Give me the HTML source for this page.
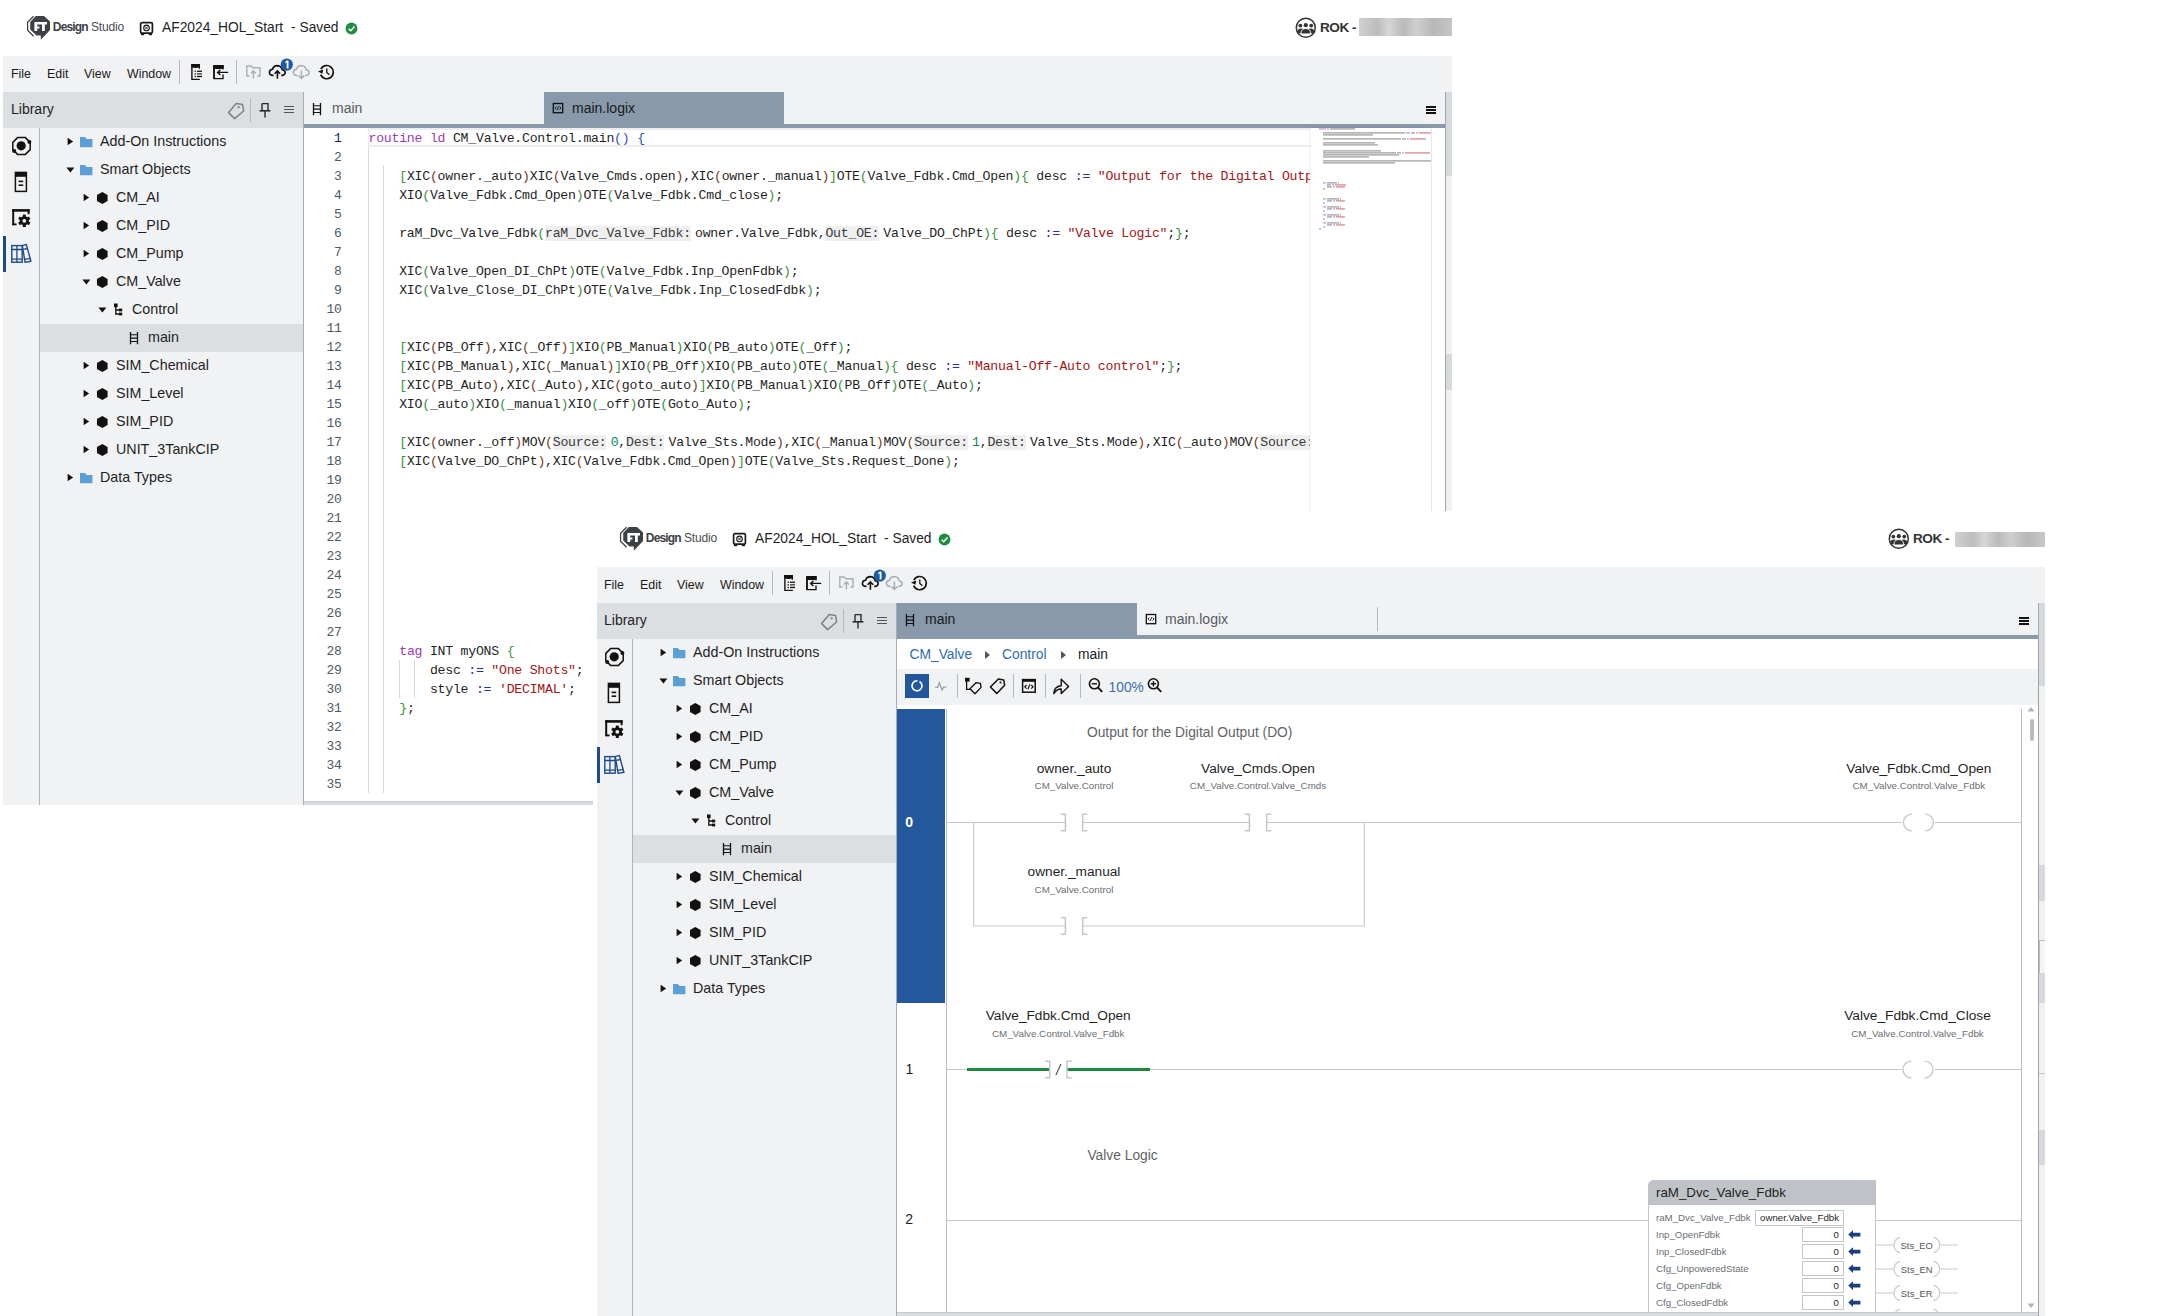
<!DOCTYPE html><html><head><meta charset="utf-8"><style>html,body{margin:0;padding:0;}body{width:2175px;height:1316px;position:relative;overflow:hidden;background:#fff;font-family:"Liberation Sans",sans-serif;}svg{overflow:visible}</style></head><body>
<div style="position:absolute;left:0px;top:0px;width:1452px;height:805px;background:#ffffff;"></div>
<svg style="position:absolute;left:24px;top:12px;" width="32" height="32" viewBox="0 0 32 32"><path d="M9.6 4.2 L3.6 10.2 L3.6 18.2 L9.6 24.2" fill="none" stroke="#3d4044" stroke-width="1.25"/><path d="M11.8 4.1 L20 4.1 L26 9.6 L26 18 L16.8 27.7 L16.8 23.5 L12.5 23.5 L6.2 17.5 L6.2 10 Z" fill="#3d4044"/><path d="M10.4 10 L23 10 L23 12.4 L20.8 12.4 L20.8 18.9 L18 18.9 L18 12.4 L13.2 12.4 L13.2 14.6 L15.4 14.6 L15.4 16.4 L13.2 16.4 L13.2 18.9 L10.4 18.9 Z" fill="#fff"/></svg>
<div style="position:absolute;left:52.80px;top:21.00px;font-family:'Liberation Sans', sans-serif;font-size:12px;line-height:12px;color:#3d4044;font-weight:bold;white-space:pre;letter-spacing:-0.83px;">Design</div>
<div style="position:absolute;left:91.00px;top:21.00px;font-family:'Liberation Sans', sans-serif;font-size:12px;line-height:12px;color:#4a4d50;font-weight:normal;white-space:pre;letter-spacing:-0.15px;">Studio</div>
<svg style="position:absolute;left:139px;top:21px;" width="15" height="15" viewBox="0 0 15 15"><rect x="1.6" y="1.6" width="11.8" height="10.6" rx="1.4" fill="none" stroke="#1a1a1a" stroke-width="1.7"/><circle cx="7.5" cy="6.9" r="2.8" fill="none" stroke="#1a1a1a" stroke-width="1.1"/><path d="M5.8 5.2 L9.2 8.6 M9.2 5.2 L5.8 8.6" stroke="#1a1a1a" stroke-width="0.9"/><rect x="2" y="12" width="3.2" height="2.2" fill="#1a1a1a"/><rect x="9.8" y="12" width="3.2" height="2.2" fill="#1a1a1a"/></svg>
<div style="position:absolute;left:162.00px;top:21.00px;font-family:'Liberation Sans', sans-serif;font-size:13.8px;line-height:13.8px;color:#1f1f1f;font-weight:normal;white-space:pre;">AF2024_HOL_Start</div>
<div style="position:absolute;left:291.00px;top:21.00px;font-family:'Liberation Sans', sans-serif;font-size:13.8px;line-height:13.8px;color:#1f1f1f;font-weight:normal;white-space:pre;">- Saved</div>
<svg style="position:absolute;left:345px;top:21.5px;" width="13" height="13" viewBox="0 0 13 13"><circle cx="6.5" cy="6.5" r="5.9" fill="#1f8d40"/><path d="M3.6 6.7 L5.7 8.7 L9.5 4.6" fill="none" stroke="#fff" stroke-width="1.5"/></svg>
<svg style="position:absolute;left:1295px;top:17px;" width="22" height="22" viewBox="0 0 22 22"><circle cx="10.8" cy="10.8" r="9.5" fill="none" stroke="#333" stroke-width="1.5"/><g transform="translate(10.8 12.4) scale(1.18) translate(-10.8 -11.4)"><circle cx="6.2" cy="8.2" r="1.6" fill="#333"/><path d="M3.6 14.6 L3.8 12.4 Q4.4 10.6 6.6 10.6 L8.4 10.8 L8 14.6 Z" fill="#333"/><circle cx="15.4" cy="8.2" r="1.6" fill="#333"/><path d="M18 14.6 L17.8 12.4 Q17.2 10.6 15 10.6 L13.2 10.8 L13.6 14.6 Z" fill="#333"/><circle cx="10.8" cy="7.8" r="2" fill="#fff"/><circle cx="10.8" cy="7.8" r="1.8" fill="#333"/><path d="M6.8 15.2 L7 12.8 Q7.6 10.6 10.8 10.6 Q14 10.6 14.6 12.8 L14.8 15.2 Z" fill="#333" stroke="#fff" stroke-width="0.7"/></g></svg>
<div style="position:absolute;left:1320.00px;top:21.00px;font-family:'Liberation Sans', sans-serif;font-size:13.6px;line-height:13.6px;color:#333;font-weight:bold;white-space:pre;letter-spacing:-0.5px;">ROK -</div>
<div style="position:absolute;left:1359px;top:18px;width:93px;height:18px;background:linear-gradient(90deg,#d0d0d0,#bdbdbd 20%,#d6d6d6 32%,#bababa 48%,#cfcfcf 62%,#b7b7b7 80%,#c6c6c6);filter:blur(0.6px);"></div>
<div style="position:absolute;left:3px;top:56px;width:1449px;height:36px;background:#f1f2f4;"></div>
<div style="position:absolute;left:11.00px;top:68.00px;font-family:'Liberation Sans', sans-serif;font-size:12.4px;line-height:12.4px;color:#1a1a1a;font-weight:normal;white-space:pre;">File</div>
<div style="position:absolute;left:47.00px;top:68.00px;font-family:'Liberation Sans', sans-serif;font-size:12.4px;line-height:12.4px;color:#1a1a1a;font-weight:normal;white-space:pre;">Edit</div>
<div style="position:absolute;left:84.00px;top:68.00px;font-family:'Liberation Sans', sans-serif;font-size:12.4px;line-height:12.4px;color:#1a1a1a;font-weight:normal;white-space:pre;">View</div>
<div style="position:absolute;left:127.00px;top:68.00px;font-family:'Liberation Sans', sans-serif;font-size:12.4px;line-height:12.4px;color:#1a1a1a;font-weight:normal;white-space:pre;">Window</div>
<div style="position:absolute;left:179px;top:60px;width:1px;height:24px;background:#b5b9bd;"></div>
<div style="position:absolute;left:236px;top:60px;width:1px;height:24px;background:#b5b9bd;"></div>
<svg style="position:absolute;left:190px;top:63px;" width="14" height="18" viewBox="0 0 14 18"><path d="M1.9 1.2 L1.9 16.4 L9.8 16.4" fill="none" stroke="#111" stroke-width="1.4"/><path d="M9.3 1.2 L9.3 5.8" stroke="#111" stroke-width="1.3"/><path d="M1.2 1 L10 1 L10 4.2 Q5.6 5.6 1.2 4.2 Z" fill="#111"/><rect x="4.6" y="7.6" width="1.3" height="1.3" fill="#111"/><rect x="7" y="7.6" width="5" height="1.3" fill="#111"/><rect x="4.6" y="10.2" width="1.3" height="1.3" fill="#111"/><rect x="7" y="10.2" width="5" height="1.3" fill="#333"/><rect x="4.6" y="12.8" width="1.3" height="1.3" fill="#111"/><rect x="7" y="12.8" width="5" height="1.3" fill="#111"/></svg>
<svg style="position:absolute;left:212px;top:64px;" width="18" height="16" viewBox="0 0 18 16"><path d="M11 5.6 L11 1.8 L2 1.8 L2 14.6 L11 14.6 L11 10.6" fill="none" stroke="#111" stroke-width="1.35"/><path d="M2 1.8 L2 14.6" stroke="#111" stroke-width="1.5"/><path d="M1.4 1.1 L11.6 1.1 L11.6 4.4 Q6.5 5.8 1.4 4.4 Z" fill="#111"/><path d="M16.2 8.4 L5.6 8.4 M8.4 5.8 L5.6 8.4 L8.4 11" fill="none" stroke="#111" stroke-width="1.4"/></svg>
<svg style="position:absolute;left:245px;top:64px;" width="17" height="16" viewBox="0 0 17 16"><path d="M4.4 12 L1.8 12 L1.8 2 L6.2 2 L7.8 3.8 L15 3.8 L15 12 L12.4 12" fill="none" stroke="#a9aeb3" stroke-width="1.4"/><path d="M8.4 14.6 L8.4 6.8 M5.8 9.4 L8.4 6.8 L11 9.4" fill="none" stroke="#a9aeb3" stroke-width="1.4"/></svg>
<svg style="position:absolute;left:268px;top:63px;" width="20" height="18" viewBox="0 0 20 18"><path d="M5.6 12.4 L4.4 12.4 Q1.4 12 1.4 9.2 Q1.6 6.4 4.6 6.2 Q5.6 2.6 9.4 2.6 Q13.4 2.8 14.2 6.8 Q17.2 7.2 17.2 9.8 Q17 12.2 14.4 12.4 L13.2 12.4" fill="none" stroke="#111" stroke-width="1.6"/><path d="M9.4 15.8 L9.4 8 M6.6 10.8 L9.4 8 L12.2 10.8" fill="none" stroke="#111" stroke-width="1.6"/></svg>
<svg style="position:absolute;left:280px;top:58px;" width="14" height="14" viewBox="0 0 14 14"><circle cx="6.8" cy="6.6" r="6.1" fill="#1f5ba3"/><path d="M7.6 2.8 L7.6 10.4" stroke="#fff" stroke-width="1.8"/><path d="M5.4 4.6 L7.8 2.8" stroke="#fff" stroke-width="1.4"/></svg>
<svg style="position:absolute;left:292px;top:63px;" width="20" height="18" viewBox="0 0 20 18"><path d="M5.6 12.4 L4.4 12.4 Q1.4 12 1.4 9.2 Q1.6 6.4 4.6 6.2 Q5.6 2.6 9.4 2.6 Q13.4 2.8 14.2 6.8 Q17.2 7.2 17.2 9.8 Q17 12.2 14.4 12.4 L13.2 12.4" fill="none" stroke="#a9aeb3" stroke-width="1.5"/><path d="M9.4 7.4 L9.4 15.4 M6.6 12.6 L9.4 15.4 L12.2 12.6" fill="none" stroke="#a9aeb3" stroke-width="1.5"/></svg>
<svg style="position:absolute;left:317px;top:63px;" width="19" height="18" viewBox="0 0 19 18"><path d="M3.8 6.2 A6.6 6.6 0 1 1 3.6 11.6" fill="none" stroke="#111" stroke-width="1.7"/><path d="M1 8.4 L5.4 10.8 L6.2 6.4 Z" fill="#111"/><path d="M9.8 5.4 L9.8 9.4 L12.4 11.8" fill="none" stroke="#111" stroke-width="1.3"/></svg>
<div style="position:absolute;left:3px;top:92px;width:300px;height:36px;background:#dcdfe2;"></div>
<div style="position:absolute;left:11.00px;top:102.00px;font-family:'Liberation Sans', sans-serif;font-size:14px;line-height:14px;color:#1f1f1f;font-weight:normal;white-space:pre;">Library</div>
<svg style="position:absolute;left:227px;top:102px;" width="18" height="18" viewBox="0 0 18 18"><path d="M9.2 1.6 L15.6 2.6 L16.6 9 L7.6 16.6 L1.6 10.6 Z" fill="none" stroke="#7f8387" stroke-width="1.5" stroke-linejoin="round"/><rect x="10.6" y="4.2" width="2" height="2" fill="#7f8387"/></svg>
<div style="position:absolute;left:250px;top:98px;width:1px;height:24px;background:#b5b9bd;"></div>
<svg style="position:absolute;left:259px;top:102px;" width="12" height="16" viewBox="0 0 12 16"><path d="M3 1.6 L9 1.6 L9 8.4 M3 1.6 L3 8.4" fill="none" stroke="#2a2a2a" stroke-width="1.4"/><path d="M0.6 8.8 L11.4 8.8" stroke="#2a2a2a" stroke-width="1.6"/><path d="M6 9 L6 15.6" stroke="#2a2a2a" stroke-width="1.4"/></svg>
<div style="position:absolute;left:284px;top:106px;width:10px;height:1.4px;background:#505458;"></div>
<div style="position:absolute;left:284px;top:109px;width:10px;height:1.4px;background:#505458;"></div>
<div style="position:absolute;left:284px;top:112px;width:10px;height:1.4px;background:#505458;"></div>
<div style="position:absolute;left:304px;top:92px;width:1141px;height:32px;background:#f1f2f4;"></div>
<div style="position:absolute;left:304px;top:124px;width:1141px;height:4px;background:#8799aa;"></div>
<div style="position:absolute;left:544px;top:92px;width:240px;height:32px;background:#8799aa;"></div>
<svg style="position:absolute;left:312px;top:102px;" width="10" height="14" viewBox="0 0 10 14"><path d="M1.5 1 L1.5 13.2 M8.5 1 L8.5 13.2" stroke="#111" stroke-width="1.3"/><path d="M1.5 3.7 L8.5 3.7 M1.5 7.1 L8.5 7.1 M1.5 10.5 L8.5 10.5" stroke="#111" stroke-width="1.1"/></svg>
<div style="position:absolute;left:332.00px;top:101.00px;font-family:'Liberation Sans', sans-serif;font-size:14px;line-height:14px;color:#555a5f;font-weight:normal;white-space:pre;">main</div>
<svg style="position:absolute;left:552px;top:102px;" width="12" height="12" viewBox="0 0 12 12"><rect x="1.3" y="1.5" width="9.4" height="9.2" fill="none" stroke="#111" stroke-width="1.3"/><path d="M4.4 4.6 L3 6 L4.4 7.4 M7.6 4.6 L9 6 L7.6 7.4 M6.6 4.2 L5.4 7.8" fill="none" stroke="#111" stroke-width="0.9"/></svg>
<div style="position:absolute;left:572.00px;top:101.00px;font-family:'Liberation Sans', sans-serif;font-size:14px;line-height:14px;color:#1a1a1a;font-weight:normal;white-space:pre;">main.logix</div>
<div style="position:absolute;left:1426px;top:106px;width:10px;height:1.5px;background:#111;"></div>
<div style="position:absolute;left:1426px;top:109px;width:10px;height:1.5px;background:#111;"></div>
<div style="position:absolute;left:1426px;top:112px;width:10px;height:1.5px;background:#111;"></div>
<div style="position:absolute;left:1445px;top:92px;width:7px;height:713px;background:#eff1f3;border-left:1px solid #a3a8ad;box-sizing:border-box;"></div>
<div style="position:absolute;left:1446px;top:92px;width:6px;height:84px;background:#d6dadd;"></div>
<div style="position:absolute;left:1446px;top:354px;width:6px;height:36px;background:#d6dadd;"></div>
<div style="position:absolute;left:3px;top:128px;width:36px;height:677px;background:#f1f2f4;"></div>
<div style="position:absolute;left:39px;top:128px;width:1px;height:677px;background:#b0b4b8;"></div>
<svg style="position:absolute;left:11px;top:136px;" width="21" height="20" viewBox="0 0 21 20"><path d="M6.6 1.6 L14.4 1.6 L19.2 6.4 L19.2 13.6 L14.4 18.4 L6.6 18.4 L1.8 13.6 L1.8 6.4 Z" fill="none" stroke="#111" stroke-width="1.5"/><circle cx="10.2" cy="9.8" r="4.6" fill="#111"/><circle cx="18.4" cy="6" r="2" fill="#111"/><circle cx="3.2" cy="15" r="2" fill="#111"/></svg>
<svg style="position:absolute;left:14px;top:171px;" width="14" height="22" viewBox="0 0 14 22"><rect x="1.4" y="1.4" width="11" height="19" fill="none" stroke="#111" stroke-width="1.5"/><rect x="1" y="1" width="12" height="4.8" fill="#111"/><rect x="4.6" y="9.6" width="4.6" height="1.6" fill="#111"/><rect x="4.6" y="13.4" width="4.6" height="1.6" fill="#111"/></svg>
<svg style="position:absolute;left:11px;top:208px;" width="22" height="21" viewBox="0 0 22 21"><path d="M1.2 2.4 L18.6 2.4" stroke="#111" stroke-width="2.6"/><path d="M2.2 1.4 L2.2 17.2" stroke="#111" stroke-width="2"/><path d="M17.6 1.4 L17.6 6.2" stroke="#111" stroke-width="2"/><path d="M1.4 16.4 L5.6 16.4" stroke="#111" stroke-width="1.8"/><circle cx="13.3" cy="12.8" r="4.6" fill="#111"/><rect x="11.80" y="6.60" width="3" height="3" fill="#111" transform="rotate(0 13.3 12.8)"/><rect x="11.80" y="6.60" width="3" height="3" fill="#111" transform="rotate(60 13.3 12.8)"/><rect x="11.80" y="6.60" width="3" height="3" fill="#111" transform="rotate(120 13.3 12.8)"/><rect x="11.80" y="6.60" width="3" height="3" fill="#111" transform="rotate(180 13.3 12.8)"/><rect x="11.80" y="6.60" width="3" height="3" fill="#111" transform="rotate(240 13.3 12.8)"/><rect x="11.80" y="6.60" width="3" height="3" fill="#111" transform="rotate(300 13.3 12.8)"/><circle cx="13.3" cy="12.8" r="1.9" fill="#f1f2f4"/></svg>
<div style="position:absolute;left:3px;top:236px;width:3px;height:36px;background:#1d4a8a;"></div>
<svg style="position:absolute;left:10px;top:243px;" width="23" height="21" viewBox="0 0 23 21"><rect x="1.8" y="2.6" width="10.4" height="16.6" fill="none" stroke="#1d4a8a" stroke-width="1.4"/><path d="M6.9 2.6 L6.9 19.2 M1.8 6.5 L12.2 6.5 M1.8 16.2 L12.2 16.2" stroke="#1d4a8a" stroke-width="1.3"/><path d="M12.3 2.6 L16.3 1.4 L20.9 18.3 L15.1 19.4 Z" fill="none" stroke="#1d4a8a" stroke-width="1.4" stroke-linejoin="round"/><path d="M13.2 6.3 L17.4 5.5 M14.7 16.3 L20.1 15.3" stroke="#1d4a8a" stroke-width="1.3"/></svg>
<div style="position:absolute;left:40px;top:128px;width:263px;height:677px;background:#f1f2f4;"></div>
<div style="position:absolute;left:303px;top:92px;width:1px;height:713px;background:#a9adb1;"></div>
<div style="position:absolute;left:40px;top:324px;width:263px;height:28px;background:#dcdfe2;"></div>
<svg style="position:absolute;left:67px;top:137.4px;" width="7" height="9" viewBox="0 0 7 9"><path d="M0.6 0.8 L6.2 4.5 L0.6 8.2 Z" fill="#111"/></svg>
<svg style="position:absolute;left:80px;top:136.5px;" width="13" height="11" viewBox="0 0 13 11"><path d="M0 0 L5 0 L6.6 2 L12.4 2 L12.4 10.2 L0 10.2 Z" fill="#5b9fd6"/></svg>
<div style="position:absolute;left:100.00px;top:134.00px;font-family:'Liberation Sans', sans-serif;font-size:14.3px;line-height:14.3px;color:#1f1f1f;font-weight:normal;white-space:pre;">Add-On Instructions</div>
<svg style="position:absolute;left:65.6px;top:167px;" width="9" height="7" viewBox="0 0 9 7"><path d="M0.4 0.6 L8.4 0.6 L4.4 5.4 Z" fill="#111"/></svg>
<svg style="position:absolute;left:80px;top:164.5px;" width="13" height="11" viewBox="0 0 13 11"><path d="M0 0 L5 0 L6.6 2 L12.4 2 L12.4 10.2 L0 10.2 Z" fill="#5b9fd6"/></svg>
<div style="position:absolute;left:100.00px;top:162.00px;font-family:'Liberation Sans', sans-serif;font-size:14.3px;line-height:14.3px;color:#1f1f1f;font-weight:normal;white-space:pre;">Smart Objects</div>
<svg style="position:absolute;left:83px;top:193.4px;" width="7" height="9" viewBox="0 0 7 9"><path d="M0.6 0.8 L6.2 4.5 L0.6 8.2 Z" fill="#111"/></svg>
<svg style="position:absolute;left:96.6px;top:192px;" width="11" height="12" viewBox="0 0 11 12"><path d="M5.3 0 L10.6 3 L10.6 9 L5.3 12 L0 9 L0 3 Z" fill="#111"/></svg>
<div style="position:absolute;left:116.00px;top:190.00px;font-family:'Liberation Sans', sans-serif;font-size:14.3px;line-height:14.3px;color:#1f1f1f;font-weight:normal;white-space:pre;">CM_AI</div>
<svg style="position:absolute;left:83px;top:221.4px;" width="7" height="9" viewBox="0 0 7 9"><path d="M0.6 0.8 L6.2 4.5 L0.6 8.2 Z" fill="#111"/></svg>
<svg style="position:absolute;left:96.6px;top:220px;" width="11" height="12" viewBox="0 0 11 12"><path d="M5.3 0 L10.6 3 L10.6 9 L5.3 12 L0 9 L0 3 Z" fill="#111"/></svg>
<div style="position:absolute;left:116.00px;top:218.00px;font-family:'Liberation Sans', sans-serif;font-size:14.3px;line-height:14.3px;color:#1f1f1f;font-weight:normal;white-space:pre;">CM_PID</div>
<svg style="position:absolute;left:83px;top:249.4px;" width="7" height="9" viewBox="0 0 7 9"><path d="M0.6 0.8 L6.2 4.5 L0.6 8.2 Z" fill="#111"/></svg>
<svg style="position:absolute;left:96.6px;top:248px;" width="11" height="12" viewBox="0 0 11 12"><path d="M5.3 0 L10.6 3 L10.6 9 L5.3 12 L0 9 L0 3 Z" fill="#111"/></svg>
<div style="position:absolute;left:116.00px;top:246.00px;font-family:'Liberation Sans', sans-serif;font-size:14.3px;line-height:14.3px;color:#1f1f1f;font-weight:normal;white-space:pre;">CM_Pump</div>
<svg style="position:absolute;left:81.6px;top:279px;" width="9" height="7" viewBox="0 0 9 7"><path d="M0.4 0.6 L8.4 0.6 L4.4 5.4 Z" fill="#111"/></svg>
<svg style="position:absolute;left:96.6px;top:276px;" width="11" height="12" viewBox="0 0 11 12"><path d="M5.3 0 L10.6 3 L10.6 9 L5.3 12 L0 9 L0 3 Z" fill="#111"/></svg>
<div style="position:absolute;left:116.00px;top:274.00px;font-family:'Liberation Sans', sans-serif;font-size:14.3px;line-height:14.3px;color:#1f1f1f;font-weight:normal;white-space:pre;">CM_Valve</div>
<svg style="position:absolute;left:97.6px;top:307px;" width="9" height="7" viewBox="0 0 9 7"><path d="M0.4 0.6 L8.4 0.6 L4.4 5.4 Z" fill="#111"/></svg>
<svg style="position:absolute;left:112.6px;top:303px;" width="11" height="13" viewBox="0 0 11 13"><rect x="1" y="0.5" width="3.6" height="3.6" fill="#111"/><path d="M2.8 3 L2.8 11 L6 11 M2.8 7 L6 7" fill="none" stroke="#111" stroke-width="1.3"/><rect x="6" y="5.6" width="3.2" height="2.8" fill="#111"/><rect x="6" y="9.6" width="3.2" height="2.8" fill="#111"/></svg>
<div style="position:absolute;left:132.00px;top:302.00px;font-family:'Liberation Sans', sans-serif;font-size:14.3px;line-height:14.3px;color:#1f1f1f;font-weight:normal;white-space:pre;">Control</div>
<svg style="position:absolute;left:128.5px;top:330.5px;" width="10" height="14" viewBox="0 0 10 14"><path d="M1.5 1 L1.5 13.2 M8.5 1 L8.5 13.2" stroke="#111" stroke-width="1.3"/><path d="M1.5 3.7 L8.5 3.7 M1.5 7.1 L8.5 7.1 M1.5 10.5 L8.5 10.5" stroke="#111" stroke-width="1.1"/></svg>
<div style="position:absolute;left:148.00px;top:330.00px;font-family:'Liberation Sans', sans-serif;font-size:14.3px;line-height:14.3px;color:#1f1f1f;font-weight:normal;white-space:pre;">main</div>
<svg style="position:absolute;left:83px;top:361.4px;" width="7" height="9" viewBox="0 0 7 9"><path d="M0.6 0.8 L6.2 4.5 L0.6 8.2 Z" fill="#111"/></svg>
<svg style="position:absolute;left:96.6px;top:360px;" width="11" height="12" viewBox="0 0 11 12"><path d="M5.3 0 L10.6 3 L10.6 9 L5.3 12 L0 9 L0 3 Z" fill="#111"/></svg>
<div style="position:absolute;left:116.00px;top:358.00px;font-family:'Liberation Sans', sans-serif;font-size:14.3px;line-height:14.3px;color:#1f1f1f;font-weight:normal;white-space:pre;">SIM_Chemical</div>
<svg style="position:absolute;left:83px;top:389.4px;" width="7" height="9" viewBox="0 0 7 9"><path d="M0.6 0.8 L6.2 4.5 L0.6 8.2 Z" fill="#111"/></svg>
<svg style="position:absolute;left:96.6px;top:388px;" width="11" height="12" viewBox="0 0 11 12"><path d="M5.3 0 L10.6 3 L10.6 9 L5.3 12 L0 9 L0 3 Z" fill="#111"/></svg>
<div style="position:absolute;left:116.00px;top:386.00px;font-family:'Liberation Sans', sans-serif;font-size:14.3px;line-height:14.3px;color:#1f1f1f;font-weight:normal;white-space:pre;">SIM_Level</div>
<svg style="position:absolute;left:83px;top:417.4px;" width="7" height="9" viewBox="0 0 7 9"><path d="M0.6 0.8 L6.2 4.5 L0.6 8.2 Z" fill="#111"/></svg>
<svg style="position:absolute;left:96.6px;top:416px;" width="11" height="12" viewBox="0 0 11 12"><path d="M5.3 0 L10.6 3 L10.6 9 L5.3 12 L0 9 L0 3 Z" fill="#111"/></svg>
<div style="position:absolute;left:116.00px;top:414.00px;font-family:'Liberation Sans', sans-serif;font-size:14.3px;line-height:14.3px;color:#1f1f1f;font-weight:normal;white-space:pre;">SIM_PID</div>
<svg style="position:absolute;left:83px;top:445.4px;" width="7" height="9" viewBox="0 0 7 9"><path d="M0.6 0.8 L6.2 4.5 L0.6 8.2 Z" fill="#111"/></svg>
<svg style="position:absolute;left:96.6px;top:444px;" width="11" height="12" viewBox="0 0 11 12"><path d="M5.3 0 L10.6 3 L10.6 9 L5.3 12 L0 9 L0 3 Z" fill="#111"/></svg>
<div style="position:absolute;left:116.00px;top:442.00px;font-family:'Liberation Sans', sans-serif;font-size:14.3px;line-height:14.3px;color:#1f1f1f;font-weight:normal;white-space:pre;">UNIT_3TankCIP</div>
<svg style="position:absolute;left:67px;top:473.4px;" width="7" height="9" viewBox="0 0 7 9"><path d="M0.6 0.8 L6.2 4.5 L0.6 8.2 Z" fill="#111"/></svg>
<svg style="position:absolute;left:80px;top:472.5px;" width="13" height="11" viewBox="0 0 13 11"><path d="M0 0 L5 0 L6.6 2 L12.4 2 L12.4 10.2 L0 10.2 Z" fill="#5b9fd6"/></svg>
<div style="position:absolute;left:100.00px;top:470.00px;font-family:'Liberation Sans', sans-serif;font-size:14.3px;line-height:14.3px;color:#1f1f1f;font-weight:normal;white-space:pre;">Data Types</div>
<div style="position:absolute;left:304px;top:128px;width:1141px;height:677px;background:#ffffff;"></div>
<div style="position:absolute;left:368px;top:128px;width:957px;height:19px;background:transparent;border:2px solid #ededed;border-right:none;box-sizing:border-box;"></div>
<div style="position:absolute;left:368px;top:147px;width:1px;height:646px;background:#d9d9d9;"></div>
<div style="position:absolute;left:383px;top:165px;width:1px;height:628px;background:#d9d9d9;"></div>
<div style="position:absolute;left:399px;top:660.0px;width:1px;height:38.0px;background:#d9d9d9;"></div>
<div style="position:absolute;left:414px;top:660.0px;width:1px;height:38.0px;background:#d9d9d9;"></div>
<div style="position:absolute;left:-258.20px;width:600px;text-align:right;top:132.00px;font-family:'Liberation Mono', monospace;font-size:13.0px;line-height:13.0px;color:#0b216f;font-weight:normal;white-space:pre;letter-spacing:-0.1px;">1</div>
<div style="position:absolute;left:-258.20px;width:600px;text-align:right;top:151.00px;font-family:'Liberation Mono', monospace;font-size:13.0px;line-height:13.0px;color:#4f5a64;font-weight:normal;white-space:pre;letter-spacing:-0.1px;">2</div>
<div style="position:absolute;left:-258.20px;width:600px;text-align:right;top:170.00px;font-family:'Liberation Mono', monospace;font-size:13.0px;line-height:13.0px;color:#4f5a64;font-weight:normal;white-space:pre;letter-spacing:-0.1px;">3</div>
<div style="position:absolute;left:-258.20px;width:600px;text-align:right;top:189.00px;font-family:'Liberation Mono', monospace;font-size:13.0px;line-height:13.0px;color:#4f5a64;font-weight:normal;white-space:pre;letter-spacing:-0.1px;">4</div>
<div style="position:absolute;left:-258.20px;width:600px;text-align:right;top:208.00px;font-family:'Liberation Mono', monospace;font-size:13.0px;line-height:13.0px;color:#4f5a64;font-weight:normal;white-space:pre;letter-spacing:-0.1px;">5</div>
<div style="position:absolute;left:-258.20px;width:600px;text-align:right;top:227.00px;font-family:'Liberation Mono', monospace;font-size:13.0px;line-height:13.0px;color:#4f5a64;font-weight:normal;white-space:pre;letter-spacing:-0.1px;">6</div>
<div style="position:absolute;left:-258.20px;width:600px;text-align:right;top:246.00px;font-family:'Liberation Mono', monospace;font-size:13.0px;line-height:13.0px;color:#4f5a64;font-weight:normal;white-space:pre;letter-spacing:-0.1px;">7</div>
<div style="position:absolute;left:-258.20px;width:600px;text-align:right;top:265.00px;font-family:'Liberation Mono', monospace;font-size:13.0px;line-height:13.0px;color:#4f5a64;font-weight:normal;white-space:pre;letter-spacing:-0.1px;">8</div>
<div style="position:absolute;left:-258.20px;width:600px;text-align:right;top:284.00px;font-family:'Liberation Mono', monospace;font-size:13.0px;line-height:13.0px;color:#4f5a64;font-weight:normal;white-space:pre;letter-spacing:-0.1px;">9</div>
<div style="position:absolute;left:-258.20px;width:600px;text-align:right;top:303.00px;font-family:'Liberation Mono', monospace;font-size:13.0px;line-height:13.0px;color:#4f5a64;font-weight:normal;white-space:pre;letter-spacing:-0.1px;">10</div>
<div style="position:absolute;left:-258.20px;width:600px;text-align:right;top:322.00px;font-family:'Liberation Mono', monospace;font-size:13.0px;line-height:13.0px;color:#4f5a64;font-weight:normal;white-space:pre;letter-spacing:-0.1px;">11</div>
<div style="position:absolute;left:-258.20px;width:600px;text-align:right;top:341.00px;font-family:'Liberation Mono', monospace;font-size:13.0px;line-height:13.0px;color:#4f5a64;font-weight:normal;white-space:pre;letter-spacing:-0.1px;">12</div>
<div style="position:absolute;left:-258.20px;width:600px;text-align:right;top:360.00px;font-family:'Liberation Mono', monospace;font-size:13.0px;line-height:13.0px;color:#4f5a64;font-weight:normal;white-space:pre;letter-spacing:-0.1px;">13</div>
<div style="position:absolute;left:-258.20px;width:600px;text-align:right;top:379.00px;font-family:'Liberation Mono', monospace;font-size:13.0px;line-height:13.0px;color:#4f5a64;font-weight:normal;white-space:pre;letter-spacing:-0.1px;">14</div>
<div style="position:absolute;left:-258.20px;width:600px;text-align:right;top:398.00px;font-family:'Liberation Mono', monospace;font-size:13.0px;line-height:13.0px;color:#4f5a64;font-weight:normal;white-space:pre;letter-spacing:-0.1px;">15</div>
<div style="position:absolute;left:-258.20px;width:600px;text-align:right;top:417.00px;font-family:'Liberation Mono', monospace;font-size:13.0px;line-height:13.0px;color:#4f5a64;font-weight:normal;white-space:pre;letter-spacing:-0.1px;">16</div>
<div style="position:absolute;left:-258.20px;width:600px;text-align:right;top:436.00px;font-family:'Liberation Mono', monospace;font-size:13.0px;line-height:13.0px;color:#4f5a64;font-weight:normal;white-space:pre;letter-spacing:-0.1px;">17</div>
<div style="position:absolute;left:-258.20px;width:600px;text-align:right;top:455.00px;font-family:'Liberation Mono', monospace;font-size:13.0px;line-height:13.0px;color:#4f5a64;font-weight:normal;white-space:pre;letter-spacing:-0.1px;">18</div>
<div style="position:absolute;left:-258.20px;width:600px;text-align:right;top:474.00px;font-family:'Liberation Mono', monospace;font-size:13.0px;line-height:13.0px;color:#4f5a64;font-weight:normal;white-space:pre;letter-spacing:-0.1px;">19</div>
<div style="position:absolute;left:-258.20px;width:600px;text-align:right;top:493.00px;font-family:'Liberation Mono', monospace;font-size:13.0px;line-height:13.0px;color:#4f5a64;font-weight:normal;white-space:pre;letter-spacing:-0.1px;">20</div>
<div style="position:absolute;left:-258.20px;width:600px;text-align:right;top:512.00px;font-family:'Liberation Mono', monospace;font-size:13.0px;line-height:13.0px;color:#4f5a64;font-weight:normal;white-space:pre;letter-spacing:-0.1px;">21</div>
<div style="position:absolute;left:-258.20px;width:600px;text-align:right;top:531.00px;font-family:'Liberation Mono', monospace;font-size:13.0px;line-height:13.0px;color:#4f5a64;font-weight:normal;white-space:pre;letter-spacing:-0.1px;">22</div>
<div style="position:absolute;left:-258.20px;width:600px;text-align:right;top:550.00px;font-family:'Liberation Mono', monospace;font-size:13.0px;line-height:13.0px;color:#4f5a64;font-weight:normal;white-space:pre;letter-spacing:-0.1px;">23</div>
<div style="position:absolute;left:-258.20px;width:600px;text-align:right;top:569.00px;font-family:'Liberation Mono', monospace;font-size:13.0px;line-height:13.0px;color:#4f5a64;font-weight:normal;white-space:pre;letter-spacing:-0.1px;">24</div>
<div style="position:absolute;left:-258.20px;width:600px;text-align:right;top:588.00px;font-family:'Liberation Mono', monospace;font-size:13.0px;line-height:13.0px;color:#4f5a64;font-weight:normal;white-space:pre;letter-spacing:-0.1px;">25</div>
<div style="position:absolute;left:-258.20px;width:600px;text-align:right;top:607.00px;font-family:'Liberation Mono', monospace;font-size:13.0px;line-height:13.0px;color:#4f5a64;font-weight:normal;white-space:pre;letter-spacing:-0.1px;">26</div>
<div style="position:absolute;left:-258.20px;width:600px;text-align:right;top:626.00px;font-family:'Liberation Mono', monospace;font-size:13.0px;line-height:13.0px;color:#4f5a64;font-weight:normal;white-space:pre;letter-spacing:-0.1px;">27</div>
<div style="position:absolute;left:-258.20px;width:600px;text-align:right;top:645.00px;font-family:'Liberation Mono', monospace;font-size:13.0px;line-height:13.0px;color:#4f5a64;font-weight:normal;white-space:pre;letter-spacing:-0.1px;">28</div>
<div style="position:absolute;left:-258.20px;width:600px;text-align:right;top:664.00px;font-family:'Liberation Mono', monospace;font-size:13.0px;line-height:13.0px;color:#4f5a64;font-weight:normal;white-space:pre;letter-spacing:-0.1px;">29</div>
<div style="position:absolute;left:-258.20px;width:600px;text-align:right;top:683.00px;font-family:'Liberation Mono', monospace;font-size:13.0px;line-height:13.0px;color:#4f5a64;font-weight:normal;white-space:pre;letter-spacing:-0.1px;">30</div>
<div style="position:absolute;left:-258.20px;width:600px;text-align:right;top:702.00px;font-family:'Liberation Mono', monospace;font-size:13.0px;line-height:13.0px;color:#4f5a64;font-weight:normal;white-space:pre;letter-spacing:-0.1px;">31</div>
<div style="position:absolute;left:-258.20px;width:600px;text-align:right;top:721.00px;font-family:'Liberation Mono', monospace;font-size:13.0px;line-height:13.0px;color:#4f5a64;font-weight:normal;white-space:pre;letter-spacing:-0.1px;">32</div>
<div style="position:absolute;left:-258.20px;width:600px;text-align:right;top:740.00px;font-family:'Liberation Mono', monospace;font-size:13.0px;line-height:13.0px;color:#4f5a64;font-weight:normal;white-space:pre;letter-spacing:-0.1px;">33</div>
<div style="position:absolute;left:-258.20px;width:600px;text-align:right;top:759.00px;font-family:'Liberation Mono', monospace;font-size:13.0px;line-height:13.0px;color:#4f5a64;font-weight:normal;white-space:pre;letter-spacing:-0.1px;">34</div>
<div style="position:absolute;left:-258.20px;width:600px;text-align:right;top:778.00px;font-family:'Liberation Mono', monospace;font-size:13.0px;line-height:13.0px;color:#4f5a64;font-weight:normal;white-space:pre;letter-spacing:-0.1px;">35</div>
<div style="position:absolute;left:304px;top:128px;width:1006px;height:677px;overflow:hidden;">
<div style="position:absolute;left:64.50px;top:4.00px;font-family:'Liberation Mono', monospace;font-size:13.2px;line-height:13.2px;letter-spacing:-0.240px;color:#1f1f1f;white-space:pre"><span style="color:#9a3cb0">routine</span> <span style="color:#9a3cb0">ld</span> CM_Valve.Control.main<span style="color:#2f4fc0">(</span><span style="color:#2f4fc0">)</span> <span style="color:#2f4fc0">{</span></div>
<div style="position:absolute;left:64.50px;top:42.00px;font-family:'Liberation Mono', monospace;font-size:13.2px;line-height:13.2px;letter-spacing:-0.240px;color:#1f1f1f;white-space:pre">    <span style="color:#3a9140">[</span>XIC<span style="color:#7b3814">(</span>owner._auto<span style="color:#7b3814">)</span>XIC<span style="color:#7b3814">(</span>Valve_Cmds.open<span style="color:#7b3814">)</span>,XIC<span style="color:#7b3814">(</span>owner._manual<span style="color:#7b3814">)</span><span style="color:#3a9140">]</span>OTE<span style="color:#3a9140">(</span>Valve_Fdbk.Cmd_Open<span style="color:#3a9140">)</span><span style="color:#3a9140">{</span> desc <span style="color:#2b2bb8">:=</span> <span style="color:#a31515">&quot;Output for the Digital Output (DO)&quot;</span>;<span style="color:#3a9140">}</span>;</div>
<div style="position:absolute;left:64.50px;top:61.00px;font-family:'Liberation Mono', monospace;font-size:13.2px;line-height:13.2px;letter-spacing:-0.240px;color:#1f1f1f;white-space:pre">    XIO<span style="color:#3a9140">(</span>Valve_Fdbk.Cmd_Open<span style="color:#3a9140">)</span>OTE<span style="color:#3a9140">(</span>Valve_Fdbk.Cmd_close<span style="color:#3a9140">)</span>;</div>
<div style="position:absolute;left:64.50px;top:99.00px;font-family:'Liberation Mono', monospace;font-size:13.2px;line-height:13.2px;letter-spacing:-0.240px;color:#1f1f1f;white-space:pre">    raM_Dvc_Valve_Fdbk<span style="color:#3a9140">(</span><span style="background:#efefef;color:#3a3a3a;margin-right:4.15px">raM_Dvc_Valve_Fdbk:</span>owner.Valve_Fdbk,<span style="background:#efefef;color:#3a3a3a;margin-right:4.15px">Out_OE:</span>Valve_DO_ChPt<span style="color:#3a9140">)</span><span style="color:#3a9140">{</span> desc <span style="color:#2b2bb8">:=</span> <span style="color:#a31515">&quot;Valve Logic&quot;</span>;<span style="color:#3a9140">}</span>;</div>
<div style="position:absolute;left:64.50px;top:137.00px;font-family:'Liberation Mono', monospace;font-size:13.2px;line-height:13.2px;letter-spacing:-0.240px;color:#1f1f1f;white-space:pre">    XIC<span style="color:#3a9140">(</span>Valve_Open_DI_ChPt<span style="color:#3a9140">)</span>OTE<span style="color:#3a9140">(</span>Valve_Fdbk.Inp_OpenFdbk<span style="color:#3a9140">)</span>;</div>
<div style="position:absolute;left:64.50px;top:156.00px;font-family:'Liberation Mono', monospace;font-size:13.2px;line-height:13.2px;letter-spacing:-0.240px;color:#1f1f1f;white-space:pre">    XIC<span style="color:#3a9140">(</span>Valve_Close_DI_ChPt<span style="color:#3a9140">)</span>OTE<span style="color:#3a9140">(</span>Valve_Fdbk.Inp_ClosedFdbk<span style="color:#3a9140">)</span>;</div>
<div style="position:absolute;left:64.50px;top:213.00px;font-family:'Liberation Mono', monospace;font-size:13.2px;line-height:13.2px;letter-spacing:-0.240px;color:#1f1f1f;white-space:pre">    <span style="color:#3a9140">[</span>XIC<span style="color:#7b3814">(</span>PB_Off<span style="color:#7b3814">)</span>,XIC<span style="color:#7b3814">(</span>_Off<span style="color:#7b3814">)</span><span style="color:#3a9140">]</span>XIO<span style="color:#3a9140">(</span>PB_Manual<span style="color:#3a9140">)</span>XIO<span style="color:#3a9140">(</span>PB_auto<span style="color:#3a9140">)</span>OTE<span style="color:#3a9140">(</span>_Off<span style="color:#3a9140">)</span>;</div>
<div style="position:absolute;left:64.50px;top:232.00px;font-family:'Liberation Mono', monospace;font-size:13.2px;line-height:13.2px;letter-spacing:-0.240px;color:#1f1f1f;white-space:pre">    <span style="color:#3a9140">[</span>XIC<span style="color:#7b3814">(</span>PB_Manual<span style="color:#7b3814">)</span>,XIC<span style="color:#7b3814">(</span>_Manual<span style="color:#7b3814">)</span><span style="color:#3a9140">]</span>XIO<span style="color:#3a9140">(</span>PB_Off<span style="color:#3a9140">)</span>XIO<span style="color:#3a9140">(</span>PB_auto<span style="color:#3a9140">)</span>OTE<span style="color:#3a9140">(</span>_Manual<span style="color:#3a9140">)</span><span style="color:#3a9140">{</span> desc <span style="color:#2b2bb8">:=</span> <span style="color:#a31515">&quot;Manual-Off-Auto control&quot;</span>;<span style="color:#3a9140">}</span>;</div>
<div style="position:absolute;left:64.50px;top:251.00px;font-family:'Liberation Mono', monospace;font-size:13.2px;line-height:13.2px;letter-spacing:-0.240px;color:#1f1f1f;white-space:pre">    <span style="color:#3a9140">[</span>XIC<span style="color:#7b3814">(</span>PB_Auto<span style="color:#7b3814">)</span>,XIC<span style="color:#7b3814">(</span>_Auto<span style="color:#7b3814">)</span>,XIC<span style="color:#7b3814">(</span>goto_auto<span style="color:#7b3814">)</span><span style="color:#3a9140">]</span>XIO<span style="color:#3a9140">(</span>PB_Manual<span style="color:#3a9140">)</span>XIO<span style="color:#3a9140">(</span>PB_Off<span style="color:#3a9140">)</span>OTE<span style="color:#3a9140">(</span>_Auto<span style="color:#3a9140">)</span>;</div>
<div style="position:absolute;left:64.50px;top:270.00px;font-family:'Liberation Mono', monospace;font-size:13.2px;line-height:13.2px;letter-spacing:-0.240px;color:#1f1f1f;white-space:pre">    XIO<span style="color:#3a9140">(</span>_auto<span style="color:#3a9140">)</span>XIO<span style="color:#3a9140">(</span>_manual<span style="color:#3a9140">)</span>XIO<span style="color:#3a9140">(</span>_off<span style="color:#3a9140">)</span>OTE<span style="color:#3a9140">(</span>Goto_Auto<span style="color:#3a9140">)</span>;</div>
<div style="position:absolute;left:64.50px;top:308.00px;font-family:'Liberation Mono', monospace;font-size:13.2px;line-height:13.2px;letter-spacing:-0.240px;color:#1f1f1f;white-space:pre">    <span style="color:#3a9140">[</span>XIC<span style="color:#7b3814">(</span>owner._off<span style="color:#7b3814">)</span>MOV<span style="color:#7b3814">(</span><span style="background:#efefef;color:#3a3a3a;margin-right:4.15px">Source:</span><span style="color:#098658">0</span>,<span style="background:#efefef;color:#3a3a3a;margin-right:4.15px">Dest:</span>Valve_Sts.Mode<span style="color:#7b3814">)</span>,XIC<span style="color:#7b3814">(</span>_Manual<span style="color:#7b3814">)</span>MOV<span style="color:#7b3814">(</span><span style="background:#efefef;color:#3a3a3a;margin-right:4.15px">Source:</span><span style="color:#098658">1</span>,<span style="background:#efefef;color:#3a3a3a;margin-right:4.15px">Dest:</span>Valve_Sts.Mode<span style="color:#7b3814">)</span>,XIC<span style="color:#7b3814">(</span>_auto<span style="color:#7b3814">)</span>MOV<span style="color:#7b3814">(</span><span style="background:#efefef;color:#3a3a3a;margin-right:4.15px">Source:</span><span style="color:#098658">2</span>,<span style="background:#efefef;color:#3a3a3a;margin-right:4.15px">Dest:</span>Valve_Sts.Mode<span style="color:#7b3814">)</span><span style="color:#3a9140">]</span>;</div>
<div style="position:absolute;left:64.50px;top:327.00px;font-family:'Liberation Mono', monospace;font-size:13.2px;line-height:13.2px;letter-spacing:-0.240px;color:#1f1f1f;white-space:pre">    <span style="color:#3a9140">[</span>XIC<span style="color:#7b3814">(</span>Valve_DO_ChPt<span style="color:#7b3814">)</span>,XIC<span style="color:#7b3814">(</span>Valve_Fdbk.Cmd_Open<span style="color:#7b3814">)</span><span style="color:#3a9140">]</span>OTE<span style="color:#3a9140">(</span>Valve_Sts.Request_Done<span style="color:#3a9140">)</span>;</div>
<div style="position:absolute;left:64.50px;top:517.00px;font-family:'Liberation Mono', monospace;font-size:13.2px;line-height:13.2px;letter-spacing:-0.240px;color:#1f1f1f;white-space:pre">    <span style="color:#9a3cb0">tag</span> INT myONS <span style="color:#3a9140">{</span></div>
<div style="position:absolute;left:64.50px;top:536.00px;font-family:'Liberation Mono', monospace;font-size:13.2px;line-height:13.2px;letter-spacing:-0.240px;color:#1f1f1f;white-space:pre">        desc <span style="color:#2b2bb8">:=</span> <span style="color:#a31515">&quot;One Shots&quot;</span>;</div>
<div style="position:absolute;left:64.50px;top:555.00px;font-family:'Liberation Mono', monospace;font-size:13.2px;line-height:13.2px;letter-spacing:-0.240px;color:#1f1f1f;white-space:pre">        style <span style="color:#2b2bb8">:=</span> <span style="color:#a31515">&#x27;DECIMAL&#x27;</span>;</div>
<div style="position:absolute;left:64.50px;top:574.00px;font-family:'Liberation Mono', monospace;font-size:13.2px;line-height:13.2px;letter-spacing:-0.240px;color:#1f1f1f;white-space:pre">    <span style="color:#3a9140">}</span>;</div>
</div>
<div style="position:absolute;left:1311px;top:128px;width:120px;height:673px;background:#ffffff;box-shadow:-1px 0 3px rgba(0,0,0,0.07);"></div>
<div style="position:absolute;left:1431px;top:128px;width:1px;height:673px;background:#e6e6e6;"></div>
<div style="position:absolute;left:1310px;top:128px;width:121px;height:120px;overflow:hidden">
<svg style="position:absolute;left:0px;top:0px;opacity:0.9;" width="121" height="120" viewBox="0 0 121 120"><rect x="9.0" y="0.3" width="7.0" height="1.2" fill="#c07ad0"/><rect x="17.0" y="0.3" width="2.0" height="1.2" fill="#c07ad0"/><rect x="20.0" y="0.3" width="25.0" height="1.2" fill="#8c8c8c"/><rect x="13.0" y="4.3" width="82.0" height="1.2" fill="#8c8c8c"/><rect x="96.0" y="4.3" width="4.0" height="1.2" fill="#9090e0"/><rect x="101.0" y="4.3" width="4.0" height="1.2" fill="#8c8c8c"/><rect x="106.0" y="4.3" width="2.0" height="1.2" fill="#9090e0"/><rect x="109.0" y="4.3" width="25.0" height="1.2" fill="#d07070"/><rect x="13.0" y="6.3" width="50.0" height="1.2" fill="#8c8c8c"/><rect x="13.0" y="10.3" width="78.0" height="1.2" fill="#8c8c8c"/><rect x="92.0" y="10.3" width="4.0" height="1.2" fill="#8c8c8c"/><rect x="97.0" y="10.3" width="2.0" height="1.2" fill="#9090e0"/><rect x="100.0" y="10.3" width="13.0" height="1.2" fill="#d07070"/><rect x="113.0" y="10.3" width="3.0" height="1.2" fill="#9090e0"/><rect x="13.0" y="14.3" width="52.0" height="1.2" fill="#8c8c8c"/><rect x="13.0" y="16.3" width="55.0" height="1.2" fill="#8c8c8c"/><rect x="13.0" y="22.3" width="58.0" height="1.2" fill="#8c8c8c"/><rect x="13.0" y="24.3" width="73.0" height="1.2" fill="#8c8c8c"/><rect x="87.0" y="24.3" width="4.0" height="1.2" fill="#8c8c8c"/><rect x="92.0" y="24.3" width="2.0" height="1.2" fill="#9090e0"/><rect x="95.0" y="24.3" width="25.0" height="1.2" fill="#d07070"/><rect x="121.0" y="24.3" width="3.0" height="1.2" fill="#9090e0"/><rect x="13.0" y="26.3" width="76.0" height="1.2" fill="#8c8c8c"/><rect x="13.0" y="28.3" width="46.0" height="1.2" fill="#8c8c8c"/><rect x="13.0" y="32.3" width="108.0" height="1.2" fill="#8c8c8c"/><rect x="13.0" y="34.3" width="72.0" height="1.2" fill="#8c8c8c"/><rect x="13.0" y="54.3" width="3.0" height="1.2" fill="#c07ad0"/><rect x="17.0" y="54.3" width="10.0" height="1.2" fill="#8c8c8c"/><rect x="28.0" y="54.3" width="1.0" height="1.2" fill="#9090e0"/><rect x="17.0" y="56.3" width="4.0" height="1.2" fill="#8c8c8c"/><rect x="22.0" y="56.3" width="2.0" height="1.2" fill="#9090e0"/><rect x="25.0" y="56.3" width="11.0" height="1.2" fill="#d07070"/><rect x="17.0" y="58.3" width="5.0" height="1.2" fill="#8c8c8c"/><rect x="23.0" y="58.3" width="2.0" height="1.2" fill="#9090e0"/><rect x="26.0" y="58.3" width="9.0" height="1.2" fill="#d07070"/><rect x="13.0" y="60.3" width="2.0" height="1.2" fill="#9090e0"/><rect x="13.0" y="70.3" width="3.0" height="1.2" fill="#c07ad0"/><rect x="17.0" y="70.3" width="12.0" height="1.2" fill="#8c8c8c"/><rect x="30.0" y="70.3" width="1.0" height="1.2" fill="#9090e0"/><rect x="17.0" y="72.3" width="5.0" height="1.2" fill="#8c8c8c"/><rect x="23.0" y="72.3" width="2.0" height="1.2" fill="#9090e0"/><rect x="26.0" y="72.3" width="9.0" height="1.2" fill="#d07070"/><rect x="13.0" y="74.3" width="2.0" height="1.2" fill="#9090e0"/><rect x="13.0" y="78.3" width="3.0" height="1.2" fill="#c07ad0"/><rect x="17.0" y="78.3" width="12.0" height="1.2" fill="#8c8c8c"/><rect x="30.0" y="78.3" width="1.0" height="1.2" fill="#9090e0"/><rect x="17.0" y="80.3" width="5.0" height="1.2" fill="#8c8c8c"/><rect x="23.0" y="80.3" width="2.0" height="1.2" fill="#9090e0"/><rect x="26.0" y="80.3" width="9.0" height="1.2" fill="#d07070"/><rect x="13.0" y="82.3" width="2.0" height="1.2" fill="#9090e0"/><rect x="13.0" y="86.3" width="3.0" height="1.2" fill="#c07ad0"/><rect x="17.0" y="86.3" width="12.0" height="1.2" fill="#8c8c8c"/><rect x="30.0" y="86.3" width="1.0" height="1.2" fill="#9090e0"/><rect x="17.0" y="88.3" width="5.0" height="1.2" fill="#8c8c8c"/><rect x="23.0" y="88.3" width="2.0" height="1.2" fill="#9090e0"/><rect x="26.0" y="88.3" width="9.0" height="1.2" fill="#d07070"/><rect x="13.0" y="90.3" width="2.0" height="1.2" fill="#9090e0"/><rect x="13.0" y="94.3" width="3.0" height="1.2" fill="#c07ad0"/><rect x="17.0" y="94.3" width="12.0" height="1.2" fill="#8c8c8c"/><rect x="30.0" y="94.3" width="1.0" height="1.2" fill="#9090e0"/><rect x="17.0" y="96.3" width="5.0" height="1.2" fill="#8c8c8c"/><rect x="23.0" y="96.3" width="2.0" height="1.2" fill="#9090e0"/><rect x="26.0" y="96.3" width="9.0" height="1.2" fill="#d07070"/><rect x="13.0" y="98.3" width="2.0" height="1.2" fill="#9090e0"/><rect x="9.0" y="100.3" width="2.0" height="1.2" fill="#9090e0"/></svg>
</div>
<div style="position:absolute;left:304px;top:801px;width:1141px;height:4px;background:#d8dcdf;border-top:1px solid #c6cacd;box-sizing:border-box;"></div>
<div style="position:absolute;left:593px;top:511px;width:1452px;height:805px;background:#ffffff;"></div>
<svg style="position:absolute;left:617px;top:523px;" width="32" height="32" viewBox="0 0 32 32"><path d="M9.6 4.2 L3.6 10.2 L3.6 18.2 L9.6 24.2" fill="none" stroke="#3d4044" stroke-width="1.25"/><path d="M11.8 4.1 L20 4.1 L26 9.6 L26 18 L16.8 27.7 L16.8 23.5 L12.5 23.5 L6.2 17.5 L6.2 10 Z" fill="#3d4044"/><path d="M10.4 10 L23 10 L23 12.4 L20.8 12.4 L20.8 18.9 L18 18.9 L18 12.4 L13.2 12.4 L13.2 14.6 L15.4 14.6 L15.4 16.4 L13.2 16.4 L13.2 18.9 L10.4 18.9 Z" fill="#fff"/></svg>
<div style="position:absolute;left:645.80px;top:532.00px;font-family:'Liberation Sans', sans-serif;font-size:12px;line-height:12px;color:#3d4044;font-weight:bold;white-space:pre;letter-spacing:-0.83px;">Design</div>
<div style="position:absolute;left:684.00px;top:532.00px;font-family:'Liberation Sans', sans-serif;font-size:12px;line-height:12px;color:#4a4d50;font-weight:normal;white-space:pre;letter-spacing:-0.15px;">Studio</div>
<svg style="position:absolute;left:732px;top:532px;" width="15" height="15" viewBox="0 0 15 15"><rect x="1.6" y="1.6" width="11.8" height="10.6" rx="1.4" fill="none" stroke="#1a1a1a" stroke-width="1.7"/><circle cx="7.5" cy="6.9" r="2.8" fill="none" stroke="#1a1a1a" stroke-width="1.1"/><path d="M5.8 5.2 L9.2 8.6 M9.2 5.2 L5.8 8.6" stroke="#1a1a1a" stroke-width="0.9"/><rect x="2" y="12" width="3.2" height="2.2" fill="#1a1a1a"/><rect x="9.8" y="12" width="3.2" height="2.2" fill="#1a1a1a"/></svg>
<div style="position:absolute;left:755.00px;top:532.00px;font-family:'Liberation Sans', sans-serif;font-size:13.8px;line-height:13.8px;color:#1f1f1f;font-weight:normal;white-space:pre;">AF2024_HOL_Start</div>
<div style="position:absolute;left:884.00px;top:532.00px;font-family:'Liberation Sans', sans-serif;font-size:13.8px;line-height:13.8px;color:#1f1f1f;font-weight:normal;white-space:pre;">- Saved</div>
<svg style="position:absolute;left:938px;top:532.5px;" width="13" height="13" viewBox="0 0 13 13"><circle cx="6.5" cy="6.5" r="5.9" fill="#1f8d40"/><path d="M3.6 6.7 L5.7 8.7 L9.5 4.6" fill="none" stroke="#fff" stroke-width="1.5"/></svg>
<svg style="position:absolute;left:1888px;top:528px;" width="22" height="22" viewBox="0 0 22 22"><circle cx="10.8" cy="10.8" r="9.5" fill="none" stroke="#333" stroke-width="1.5"/><g transform="translate(10.8 12.4) scale(1.18) translate(-10.8 -11.4)"><circle cx="6.2" cy="8.2" r="1.6" fill="#333"/><path d="M3.6 14.6 L3.8 12.4 Q4.4 10.6 6.6 10.6 L8.4 10.8 L8 14.6 Z" fill="#333"/><circle cx="15.4" cy="8.2" r="1.6" fill="#333"/><path d="M18 14.6 L17.8 12.4 Q17.2 10.6 15 10.6 L13.2 10.8 L13.6 14.6 Z" fill="#333"/><circle cx="10.8" cy="7.8" r="2" fill="#fff"/><circle cx="10.8" cy="7.8" r="1.8" fill="#333"/><path d="M6.8 15.2 L7 12.8 Q7.6 10.6 10.8 10.6 Q14 10.6 14.6 12.8 L14.8 15.2 Z" fill="#333" stroke="#fff" stroke-width="0.7"/></g></svg>
<div style="position:absolute;left:1913.00px;top:532.00px;font-family:'Liberation Sans', sans-serif;font-size:13.6px;line-height:13.6px;color:#333;font-weight:bold;white-space:pre;letter-spacing:-0.5px;">ROK -</div>
<div style="position:absolute;left:1955px;top:532px;width:90px;height:15px;background:linear-gradient(90deg,#d0d0d0,#bdbdbd 20%,#d6d6d6 32%,#bababa 48%,#cfcfcf 62%,#b7b7b7 80%,#c6c6c6);filter:blur(0.6px);"></div>
<div style="position:absolute;left:597px;top:567px;width:1448px;height:36px;background:#f1f2f4;"></div>
<div style="position:absolute;left:604.00px;top:579.00px;font-family:'Liberation Sans', sans-serif;font-size:12.4px;line-height:12.4px;color:#1a1a1a;font-weight:normal;white-space:pre;">File</div>
<div style="position:absolute;left:640.00px;top:579.00px;font-family:'Liberation Sans', sans-serif;font-size:12.4px;line-height:12.4px;color:#1a1a1a;font-weight:normal;white-space:pre;">Edit</div>
<div style="position:absolute;left:677.00px;top:579.00px;font-family:'Liberation Sans', sans-serif;font-size:12.4px;line-height:12.4px;color:#1a1a1a;font-weight:normal;white-space:pre;">View</div>
<div style="position:absolute;left:720.00px;top:579.00px;font-family:'Liberation Sans', sans-serif;font-size:12.4px;line-height:12.4px;color:#1a1a1a;font-weight:normal;white-space:pre;">Window</div>
<div style="position:absolute;left:772px;top:571px;width:1px;height:24px;background:#b5b9bd;"></div>
<div style="position:absolute;left:829px;top:571px;width:1px;height:24px;background:#b5b9bd;"></div>
<svg style="position:absolute;left:783px;top:574px;" width="14" height="18" viewBox="0 0 14 18"><path d="M1.9 1.2 L1.9 16.4 L9.8 16.4" fill="none" stroke="#111" stroke-width="1.4"/><path d="M9.3 1.2 L9.3 5.8" stroke="#111" stroke-width="1.3"/><path d="M1.2 1 L10 1 L10 4.2 Q5.6 5.6 1.2 4.2 Z" fill="#111"/><rect x="4.6" y="7.6" width="1.3" height="1.3" fill="#111"/><rect x="7" y="7.6" width="5" height="1.3" fill="#111"/><rect x="4.6" y="10.2" width="1.3" height="1.3" fill="#111"/><rect x="7" y="10.2" width="5" height="1.3" fill="#333"/><rect x="4.6" y="12.8" width="1.3" height="1.3" fill="#111"/><rect x="7" y="12.8" width="5" height="1.3" fill="#111"/></svg>
<svg style="position:absolute;left:805px;top:575px;" width="18" height="16" viewBox="0 0 18 16"><path d="M11 5.6 L11 1.8 L2 1.8 L2 14.6 L11 14.6 L11 10.6" fill="none" stroke="#111" stroke-width="1.35"/><path d="M2 1.8 L2 14.6" stroke="#111" stroke-width="1.5"/><path d="M1.4 1.1 L11.6 1.1 L11.6 4.4 Q6.5 5.8 1.4 4.4 Z" fill="#111"/><path d="M16.2 8.4 L5.6 8.4 M8.4 5.8 L5.6 8.4 L8.4 11" fill="none" stroke="#111" stroke-width="1.4"/></svg>
<svg style="position:absolute;left:838px;top:575px;" width="17" height="16" viewBox="0 0 17 16"><path d="M4.4 12 L1.8 12 L1.8 2 L6.2 2 L7.8 3.8 L15 3.8 L15 12 L12.4 12" fill="none" stroke="#a9aeb3" stroke-width="1.4"/><path d="M8.4 14.6 L8.4 6.8 M5.8 9.4 L8.4 6.8 L11 9.4" fill="none" stroke="#a9aeb3" stroke-width="1.4"/></svg>
<svg style="position:absolute;left:861px;top:574px;" width="20" height="18" viewBox="0 0 20 18"><path d="M5.6 12.4 L4.4 12.4 Q1.4 12 1.4 9.2 Q1.6 6.4 4.6 6.2 Q5.6 2.6 9.4 2.6 Q13.4 2.8 14.2 6.8 Q17.2 7.2 17.2 9.8 Q17 12.2 14.4 12.4 L13.2 12.4" fill="none" stroke="#111" stroke-width="1.6"/><path d="M9.4 15.8 L9.4 8 M6.6 10.8 L9.4 8 L12.2 10.8" fill="none" stroke="#111" stroke-width="1.6"/></svg>
<svg style="position:absolute;left:873px;top:569px;" width="14" height="14" viewBox="0 0 14 14"><circle cx="6.8" cy="6.6" r="6.1" fill="#1f5ba3"/><path d="M7.6 2.8 L7.6 10.4" stroke="#fff" stroke-width="1.8"/><path d="M5.4 4.6 L7.8 2.8" stroke="#fff" stroke-width="1.4"/></svg>
<svg style="position:absolute;left:885px;top:574px;" width="20" height="18" viewBox="0 0 20 18"><path d="M5.6 12.4 L4.4 12.4 Q1.4 12 1.4 9.2 Q1.6 6.4 4.6 6.2 Q5.6 2.6 9.4 2.6 Q13.4 2.8 14.2 6.8 Q17.2 7.2 17.2 9.8 Q17 12.2 14.4 12.4 L13.2 12.4" fill="none" stroke="#a9aeb3" stroke-width="1.5"/><path d="M9.4 7.4 L9.4 15.4 M6.6 12.6 L9.4 15.4 L12.2 12.6" fill="none" stroke="#a9aeb3" stroke-width="1.5"/></svg>
<svg style="position:absolute;left:910px;top:574px;" width="19" height="18" viewBox="0 0 19 18"><path d="M3.8 6.2 A6.6 6.6 0 1 1 3.6 11.6" fill="none" stroke="#111" stroke-width="1.7"/><path d="M1 8.4 L5.4 10.8 L6.2 6.4 Z" fill="#111"/><path d="M9.8 5.4 L9.8 9.4 L12.4 11.8" fill="none" stroke="#111" stroke-width="1.3"/></svg>
<div style="position:absolute;left:597px;top:603px;width:299px;height:36px;background:#dcdfe2;"></div>
<div style="position:absolute;left:604.00px;top:613.00px;font-family:'Liberation Sans', sans-serif;font-size:14px;line-height:14px;color:#1f1f1f;font-weight:normal;white-space:pre;">Library</div>
<svg style="position:absolute;left:820px;top:613px;" width="18" height="18" viewBox="0 0 18 18"><path d="M9.2 1.6 L15.6 2.6 L16.6 9 L7.6 16.6 L1.6 10.6 Z" fill="none" stroke="#7f8387" stroke-width="1.5" stroke-linejoin="round"/><rect x="10.6" y="4.2" width="2" height="2" fill="#7f8387"/></svg>
<div style="position:absolute;left:843px;top:609px;width:1px;height:24px;background:#b5b9bd;"></div>
<svg style="position:absolute;left:852px;top:613px;" width="12" height="16" viewBox="0 0 12 16"><path d="M3 1.6 L9 1.6 L9 8.4 M3 1.6 L3 8.4" fill="none" stroke="#2a2a2a" stroke-width="1.4"/><path d="M0.6 8.8 L11.4 8.8" stroke="#2a2a2a" stroke-width="1.6"/><path d="M6 9 L6 15.6" stroke="#2a2a2a" stroke-width="1.4"/></svg>
<div style="position:absolute;left:877px;top:617px;width:10px;height:1.4px;background:#505458;"></div>
<div style="position:absolute;left:877px;top:620px;width:10px;height:1.4px;background:#505458;"></div>
<div style="position:absolute;left:877px;top:623px;width:10px;height:1.4px;background:#505458;"></div>
<div style="position:absolute;left:897px;top:603px;width:1141px;height:32px;background:#f1f2f4;"></div>
<div style="position:absolute;left:897px;top:635px;width:1141px;height:4px;background:#8799aa;"></div>
<div style="position:absolute;left:897px;top:603px;width:240px;height:32px;background:#8799aa;"></div>
<svg style="position:absolute;left:905px;top:613px;" width="10" height="14" viewBox="0 0 10 14"><path d="M1.5 1 L1.5 13.2 M8.5 1 L8.5 13.2" stroke="#111" stroke-width="1.3"/><path d="M1.5 3.7 L8.5 3.7 M1.5 7.1 L8.5 7.1 M1.5 10.5 L8.5 10.5" stroke="#111" stroke-width="1.1"/></svg>
<div style="position:absolute;left:925.00px;top:612.00px;font-family:'Liberation Sans', sans-serif;font-size:14px;line-height:14px;color:#1a1a1a;font-weight:normal;white-space:pre;">main</div>
<svg style="position:absolute;left:1145px;top:613px;" width="12" height="12" viewBox="0 0 12 12"><rect x="1.3" y="1.5" width="9.4" height="9.2" fill="none" stroke="#111" stroke-width="1.3"/><path d="M4.4 4.6 L3 6 L4.4 7.4 M7.6 4.6 L9 6 L7.6 7.4 M6.6 4.2 L5.4 7.8" fill="none" stroke="#111" stroke-width="0.9"/></svg>
<div style="position:absolute;left:1165.00px;top:612.00px;font-family:'Liberation Sans', sans-serif;font-size:14px;line-height:14px;color:#555a5f;font-weight:normal;white-space:pre;">main.logix</div>
<div style="position:absolute;left:1377px;top:607px;width:1px;height:24px;background:#b5b9bd;"></div>
<div style="position:absolute;left:2019px;top:617px;width:10px;height:1.5px;background:#111;"></div>
<div style="position:absolute;left:2019px;top:620px;width:10px;height:1.5px;background:#111;"></div>
<div style="position:absolute;left:2019px;top:623px;width:10px;height:1.5px;background:#111;"></div>
<div style="position:absolute;left:2038px;top:603px;width:7px;height:713px;background:#eff1f3;border-left:1px solid #a3a8ad;box-sizing:border-box;"></div>
<div style="position:absolute;left:2039px;top:603px;width:6px;height:83px;background:#d6dadd;"></div>
<div style="position:absolute;left:2039px;top:865px;width:6px;height:36px;background:#d6dadd;"></div>
<div style="position:absolute;left:2039px;top:973px;width:6px;height:30px;background:#d6dadd;"></div>
<div style="position:absolute;left:2039px;top:1130px;width:6px;height:35px;background:#d6dadd;"></div>
<div style="position:absolute;left:2039px;top:940px;width:6px;height:33px;background:#f4f5f6;border-top:1px solid #b8bcc0;border-left:1px solid #b8bcc0;box-sizing:border-box;"></div>
<div style="position:absolute;left:2039px;top:1073px;width:6px;height:1px;background:#c4c8cc;"></div>
<div style="position:absolute;left:597px;top:639px;width:35px;height:677px;background:#f1f2f4;"></div>
<div style="position:absolute;left:632px;top:639px;width:1px;height:677px;background:#b0b4b8;"></div>
<svg style="position:absolute;left:604px;top:647px;" width="21" height="20" viewBox="0 0 21 20"><path d="M6.6 1.6 L14.4 1.6 L19.2 6.4 L19.2 13.6 L14.4 18.4 L6.6 18.4 L1.8 13.6 L1.8 6.4 Z" fill="none" stroke="#111" stroke-width="1.5"/><circle cx="10.2" cy="9.8" r="4.6" fill="#111"/><circle cx="18.4" cy="6" r="2" fill="#111"/><circle cx="3.2" cy="15" r="2" fill="#111"/></svg>
<svg style="position:absolute;left:607px;top:682px;" width="14" height="22" viewBox="0 0 14 22"><rect x="1.4" y="1.4" width="11" height="19" fill="none" stroke="#111" stroke-width="1.5"/><rect x="1" y="1" width="12" height="4.8" fill="#111"/><rect x="4.6" y="9.6" width="4.6" height="1.6" fill="#111"/><rect x="4.6" y="13.4" width="4.6" height="1.6" fill="#111"/></svg>
<svg style="position:absolute;left:604px;top:719px;" width="22" height="21" viewBox="0 0 22 21"><path d="M1.2 2.4 L18.6 2.4" stroke="#111" stroke-width="2.6"/><path d="M2.2 1.4 L2.2 17.2" stroke="#111" stroke-width="2"/><path d="M17.6 1.4 L17.6 6.2" stroke="#111" stroke-width="2"/><path d="M1.4 16.4 L5.6 16.4" stroke="#111" stroke-width="1.8"/><circle cx="13.3" cy="12.8" r="4.6" fill="#111"/><rect x="11.80" y="6.60" width="3" height="3" fill="#111" transform="rotate(0 13.3 12.8)"/><rect x="11.80" y="6.60" width="3" height="3" fill="#111" transform="rotate(60 13.3 12.8)"/><rect x="11.80" y="6.60" width="3" height="3" fill="#111" transform="rotate(120 13.3 12.8)"/><rect x="11.80" y="6.60" width="3" height="3" fill="#111" transform="rotate(180 13.3 12.8)"/><rect x="11.80" y="6.60" width="3" height="3" fill="#111" transform="rotate(240 13.3 12.8)"/><rect x="11.80" y="6.60" width="3" height="3" fill="#111" transform="rotate(300 13.3 12.8)"/><circle cx="13.3" cy="12.8" r="1.9" fill="#f1f2f4"/></svg>
<div style="position:absolute;left:597px;top:747px;width:3px;height:36px;background:#1d4a8a;"></div>
<svg style="position:absolute;left:603px;top:754px;" width="23" height="21" viewBox="0 0 23 21"><rect x="1.8" y="2.6" width="10.4" height="16.6" fill="none" stroke="#1d4a8a" stroke-width="1.4"/><path d="M6.9 2.6 L6.9 19.2 M1.8 6.5 L12.2 6.5 M1.8 16.2 L12.2 16.2" stroke="#1d4a8a" stroke-width="1.3"/><path d="M12.3 2.6 L16.3 1.4 L20.9 18.3 L15.1 19.4 Z" fill="none" stroke="#1d4a8a" stroke-width="1.4" stroke-linejoin="round"/><path d="M13.2 6.3 L17.4 5.5 M14.7 16.3 L20.1 15.3" stroke="#1d4a8a" stroke-width="1.3"/></svg>
<div style="position:absolute;left:633px;top:639px;width:263px;height:677px;background:#f1f2f4;"></div>
<div style="position:absolute;left:896px;top:603px;width:1px;height:713px;background:#a9adb1;"></div>
<div style="position:absolute;left:633px;top:835px;width:263px;height:28px;background:#dcdfe2;"></div>
<svg style="position:absolute;left:660px;top:648.4px;" width="7" height="9" viewBox="0 0 7 9"><path d="M0.6 0.8 L6.2 4.5 L0.6 8.2 Z" fill="#111"/></svg>
<svg style="position:absolute;left:673px;top:647.5px;" width="13" height="11" viewBox="0 0 13 11"><path d="M0 0 L5 0 L6.6 2 L12.4 2 L12.4 10.2 L0 10.2 Z" fill="#5b9fd6"/></svg>
<div style="position:absolute;left:693.00px;top:645.00px;font-family:'Liberation Sans', sans-serif;font-size:14.3px;line-height:14.3px;color:#1f1f1f;font-weight:normal;white-space:pre;">Add-On Instructions</div>
<svg style="position:absolute;left:658.6px;top:678px;" width="9" height="7" viewBox="0 0 9 7"><path d="M0.4 0.6 L8.4 0.6 L4.4 5.4 Z" fill="#111"/></svg>
<svg style="position:absolute;left:673px;top:675.5px;" width="13" height="11" viewBox="0 0 13 11"><path d="M0 0 L5 0 L6.6 2 L12.4 2 L12.4 10.2 L0 10.2 Z" fill="#5b9fd6"/></svg>
<div style="position:absolute;left:693.00px;top:673.00px;font-family:'Liberation Sans', sans-serif;font-size:14.3px;line-height:14.3px;color:#1f1f1f;font-weight:normal;white-space:pre;">Smart Objects</div>
<svg style="position:absolute;left:676px;top:704.4px;" width="7" height="9" viewBox="0 0 7 9"><path d="M0.6 0.8 L6.2 4.5 L0.6 8.2 Z" fill="#111"/></svg>
<svg style="position:absolute;left:689.6px;top:703px;" width="11" height="12" viewBox="0 0 11 12"><path d="M5.3 0 L10.6 3 L10.6 9 L5.3 12 L0 9 L0 3 Z" fill="#111"/></svg>
<div style="position:absolute;left:709.00px;top:701.00px;font-family:'Liberation Sans', sans-serif;font-size:14.3px;line-height:14.3px;color:#1f1f1f;font-weight:normal;white-space:pre;">CM_AI</div>
<svg style="position:absolute;left:676px;top:732.4px;" width="7" height="9" viewBox="0 0 7 9"><path d="M0.6 0.8 L6.2 4.5 L0.6 8.2 Z" fill="#111"/></svg>
<svg style="position:absolute;left:689.6px;top:731px;" width="11" height="12" viewBox="0 0 11 12"><path d="M5.3 0 L10.6 3 L10.6 9 L5.3 12 L0 9 L0 3 Z" fill="#111"/></svg>
<div style="position:absolute;left:709.00px;top:729.00px;font-family:'Liberation Sans', sans-serif;font-size:14.3px;line-height:14.3px;color:#1f1f1f;font-weight:normal;white-space:pre;">CM_PID</div>
<svg style="position:absolute;left:676px;top:760.4px;" width="7" height="9" viewBox="0 0 7 9"><path d="M0.6 0.8 L6.2 4.5 L0.6 8.2 Z" fill="#111"/></svg>
<svg style="position:absolute;left:689.6px;top:759px;" width="11" height="12" viewBox="0 0 11 12"><path d="M5.3 0 L10.6 3 L10.6 9 L5.3 12 L0 9 L0 3 Z" fill="#111"/></svg>
<div style="position:absolute;left:709.00px;top:757.00px;font-family:'Liberation Sans', sans-serif;font-size:14.3px;line-height:14.3px;color:#1f1f1f;font-weight:normal;white-space:pre;">CM_Pump</div>
<svg style="position:absolute;left:674.6px;top:790px;" width="9" height="7" viewBox="0 0 9 7"><path d="M0.4 0.6 L8.4 0.6 L4.4 5.4 Z" fill="#111"/></svg>
<svg style="position:absolute;left:689.6px;top:787px;" width="11" height="12" viewBox="0 0 11 12"><path d="M5.3 0 L10.6 3 L10.6 9 L5.3 12 L0 9 L0 3 Z" fill="#111"/></svg>
<div style="position:absolute;left:709.00px;top:785.00px;font-family:'Liberation Sans', sans-serif;font-size:14.3px;line-height:14.3px;color:#1f1f1f;font-weight:normal;white-space:pre;">CM_Valve</div>
<svg style="position:absolute;left:690.6px;top:818px;" width="9" height="7" viewBox="0 0 9 7"><path d="M0.4 0.6 L8.4 0.6 L4.4 5.4 Z" fill="#111"/></svg>
<svg style="position:absolute;left:705.6px;top:814px;" width="11" height="13" viewBox="0 0 11 13"><rect x="1" y="0.5" width="3.6" height="3.6" fill="#111"/><path d="M2.8 3 L2.8 11 L6 11 M2.8 7 L6 7" fill="none" stroke="#111" stroke-width="1.3"/><rect x="6" y="5.6" width="3.2" height="2.8" fill="#111"/><rect x="6" y="9.6" width="3.2" height="2.8" fill="#111"/></svg>
<div style="position:absolute;left:725.00px;top:813.00px;font-family:'Liberation Sans', sans-serif;font-size:14.3px;line-height:14.3px;color:#1f1f1f;font-weight:normal;white-space:pre;">Control</div>
<svg style="position:absolute;left:721.5px;top:841.5px;" width="10" height="14" viewBox="0 0 10 14"><path d="M1.5 1 L1.5 13.2 M8.5 1 L8.5 13.2" stroke="#111" stroke-width="1.3"/><path d="M1.5 3.7 L8.5 3.7 M1.5 7.1 L8.5 7.1 M1.5 10.5 L8.5 10.5" stroke="#111" stroke-width="1.1"/></svg>
<div style="position:absolute;left:741.00px;top:841.00px;font-family:'Liberation Sans', sans-serif;font-size:14.3px;line-height:14.3px;color:#1f1f1f;font-weight:normal;white-space:pre;">main</div>
<svg style="position:absolute;left:676px;top:872.4px;" width="7" height="9" viewBox="0 0 7 9"><path d="M0.6 0.8 L6.2 4.5 L0.6 8.2 Z" fill="#111"/></svg>
<svg style="position:absolute;left:689.6px;top:871px;" width="11" height="12" viewBox="0 0 11 12"><path d="M5.3 0 L10.6 3 L10.6 9 L5.3 12 L0 9 L0 3 Z" fill="#111"/></svg>
<div style="position:absolute;left:709.00px;top:869.00px;font-family:'Liberation Sans', sans-serif;font-size:14.3px;line-height:14.3px;color:#1f1f1f;font-weight:normal;white-space:pre;">SIM_Chemical</div>
<svg style="position:absolute;left:676px;top:900.4px;" width="7" height="9" viewBox="0 0 7 9"><path d="M0.6 0.8 L6.2 4.5 L0.6 8.2 Z" fill="#111"/></svg>
<svg style="position:absolute;left:689.6px;top:899px;" width="11" height="12" viewBox="0 0 11 12"><path d="M5.3 0 L10.6 3 L10.6 9 L5.3 12 L0 9 L0 3 Z" fill="#111"/></svg>
<div style="position:absolute;left:709.00px;top:897.00px;font-family:'Liberation Sans', sans-serif;font-size:14.3px;line-height:14.3px;color:#1f1f1f;font-weight:normal;white-space:pre;">SIM_Level</div>
<svg style="position:absolute;left:676px;top:928.4px;" width="7" height="9" viewBox="0 0 7 9"><path d="M0.6 0.8 L6.2 4.5 L0.6 8.2 Z" fill="#111"/></svg>
<svg style="position:absolute;left:689.6px;top:927px;" width="11" height="12" viewBox="0 0 11 12"><path d="M5.3 0 L10.6 3 L10.6 9 L5.3 12 L0 9 L0 3 Z" fill="#111"/></svg>
<div style="position:absolute;left:709.00px;top:925.00px;font-family:'Liberation Sans', sans-serif;font-size:14.3px;line-height:14.3px;color:#1f1f1f;font-weight:normal;white-space:pre;">SIM_PID</div>
<svg style="position:absolute;left:676px;top:956.4px;" width="7" height="9" viewBox="0 0 7 9"><path d="M0.6 0.8 L6.2 4.5 L0.6 8.2 Z" fill="#111"/></svg>
<svg style="position:absolute;left:689.6px;top:955px;" width="11" height="12" viewBox="0 0 11 12"><path d="M5.3 0 L10.6 3 L10.6 9 L5.3 12 L0 9 L0 3 Z" fill="#111"/></svg>
<div style="position:absolute;left:709.00px;top:953.00px;font-family:'Liberation Sans', sans-serif;font-size:14.3px;line-height:14.3px;color:#1f1f1f;font-weight:normal;white-space:pre;">UNIT_3TankCIP</div>
<svg style="position:absolute;left:660px;top:984.4px;" width="7" height="9" viewBox="0 0 7 9"><path d="M0.6 0.8 L6.2 4.5 L0.6 8.2 Z" fill="#111"/></svg>
<svg style="position:absolute;left:673px;top:983.5px;" width="13" height="11" viewBox="0 0 13 11"><path d="M0 0 L5 0 L6.6 2 L12.4 2 L12.4 10.2 L0 10.2 Z" fill="#5b9fd6"/></svg>
<div style="position:absolute;left:693.00px;top:981.00px;font-family:'Liberation Sans', sans-serif;font-size:14.3px;line-height:14.3px;color:#1f1f1f;font-weight:normal;white-space:pre;">Data Types</div>
<div style="position:absolute;left:897px;top:639px;width:1141px;height:30px;background:#ffffff;"></div>
<div style="position:absolute;left:909.50px;top:648.00px;font-family:'Liberation Sans', sans-serif;font-size:13.8px;line-height:13.8px;color:#2f6bb3;font-weight:normal;white-space:pre;">CM_Valve</div>
<svg style="position:absolute;left:984px;top:650px;" width="8" height="10" viewBox="0 0 8 10"><path d="M1 1 L6 5 L1 9 Z" fill="#555"/></svg>
<div style="position:absolute;left:1002.00px;top:648.00px;font-family:'Liberation Sans', sans-serif;font-size:13.8px;line-height:13.8px;color:#2f6bb3;font-weight:normal;white-space:pre;">Control</div>
<svg style="position:absolute;left:1060px;top:650px;" width="8" height="10" viewBox="0 0 8 10"><path d="M1 1 L6 5 L1 9 Z" fill="#555"/></svg>
<div style="position:absolute;left:1078.00px;top:648.00px;font-family:'Liberation Sans', sans-serif;font-size:13.8px;line-height:13.8px;color:#1a1a1a;font-weight:normal;white-space:pre;">main</div>
<div style="position:absolute;left:897px;top:669px;width:1141px;height:36px;background:#f1f2f4;"></div>
<div style="position:absolute;left:905px;top:674px;width:24px;height:24px;background:#2257a0;"></div>
<svg style="position:absolute;left:905px;top:674px;" width="24" height="24" viewBox="0 0 24 24"><path d="M14.50 7.47 A5.0 5.0 0 1 1 12.44 6.82" fill="none" stroke="#fff" stroke-width="1.6"/></svg>
<svg style="position:absolute;left:934px;top:676px;" width="14" height="20" viewBox="0 0 14 20"><path d="M1.2 11.4 L3.6 11.4 L5.4 6.8 L8 14 L9.6 11.2 L12.4 11.2" fill="none" stroke="#9aa0a6" stroke-width="1.3"/></svg>
<div style="position:absolute;left:957px;top:674px;width:1px;height:24px;background:#b5b9bd;"></div>
<div style="position:absolute;left:1013px;top:674px;width:1px;height:24px;background:#b5b9bd;"></div>
<div style="position:absolute;left:1045px;top:674px;width:1px;height:24px;background:#b5b9bd;"></div>
<div style="position:absolute;left:1080px;top:674px;width:1px;height:24px;background:#b5b9bd;"></div>
<svg style="position:absolute;left:964px;top:676px;" width="20" height="20" viewBox="0 0 20 20"><rect x="1" y="1.8" width="4.6" height="3.8" fill="#111"/><path d="M2.6 5 L2.6 13.4 L6 13.4" fill="none" stroke="#111" stroke-width="1.3"/><path d="M12.2 6.6 L16.4 7.4 L17.1 11.4 L11 17.8 L6 12.8 Z" fill="none" stroke="#111" stroke-width="1.35" stroke-linejoin="round"/></svg>
<svg style="position:absolute;left:988px;top:676px;" width="20" height="20" viewBox="0 0 20 20"><path d="M10.4 3 L15.8 4 L16.6 9.2 L8.8 17.4 L2.4 11 Z" fill="none" stroke="#111" stroke-width="1.5" stroke-linejoin="round"/><rect x="11.6" y="5.6" width="1.8" height="1.8" fill="#111"/></svg>
<svg style="position:absolute;left:1021px;top:678px;" width="18" height="17" viewBox="0 0 18 17"><rect x="1.6" y="1.6" width="12.6" height="12.6" fill="none" stroke="#111" stroke-width="1.5"/><rect x="1" y="1" width="13.8" height="2.8" fill="#111"/><path d="M5.6 7 L3.8 8.8 L5.6 10.6 M10.2 7 L12 8.8 L10.2 10.6 M8.8 6.4 L7 11.2" fill="none" stroke="#111" stroke-width="1.2"/></svg>
<svg style="position:absolute;left:1052px;top:677px;" width="20" height="18" viewBox="0 0 20 18"><path d="M1.8 16.6 Q2.2 9.4 9.2 8.8 L9.2 2.2 L16.6 9.4 L9.2 16.6 L9.2 12 Q4.8 11.8 1.8 16.6 Z" fill="none" stroke="#111" stroke-width="1.4" stroke-linejoin="round"/></svg>
<svg style="position:absolute;left:1088px;top:677px;" width="16" height="17" viewBox="0 0 16 17"><circle cx="6.4" cy="6.8" r="5" fill="none" stroke="#111" stroke-width="1.6"/><path d="M10 10.4 L14.2 14.8" stroke="#111" stroke-width="1.8"/><path d="M3.8 6.8 L9 6.8" stroke="#111" stroke-width="1.4"/></svg>
<div style="position:absolute;left:1108.60px;top:681.00px;font-family:'Liberation Sans', sans-serif;font-size:13.8px;line-height:13.8px;color:#3a6fae;font-weight:normal;white-space:pre;">100%</div>
<svg style="position:absolute;left:1147px;top:677px;" width="16" height="17" viewBox="0 0 16 17"><circle cx="6.4" cy="6.8" r="5" fill="none" stroke="#111" stroke-width="1.6"/><path d="M10 10.4 L14.2 14.8" stroke="#111" stroke-width="1.8"/><path d="M3.8 6.8 L9 6.8 M6.4 4.2 L6.4 9.4" stroke="#111" stroke-width="1.4"/></svg>
<div style="position:absolute;left:897px;top:705px;width:1141px;height:611px;background:#ffffff;"></div>
<div style="position:absolute;left:2038px;top:639px;width:1px;height:677px;background:#9ea3a8;"></div>
<div style="position:absolute;left:897px;top:709px;width:48px;height:294px;background:#24589c;"></div>
<div style="position:absolute;left:905.20px;top:815.00px;font-family:'Liberation Sans', sans-serif;font-size:14px;line-height:14px;color:#ffffff;font-weight:bold;white-space:pre;">0</div>
<div style="position:absolute;left:905.40px;top:1062.00px;font-family:'Liberation Sans', sans-serif;font-size:14px;line-height:14px;color:#222;font-weight:normal;white-space:pre;">1</div>
<div style="position:absolute;left:905.20px;top:1212.00px;font-family:'Liberation Sans', sans-serif;font-size:14px;line-height:14px;color:#222;font-weight:normal;white-space:pre;">2</div>
<div style="position:absolute;left:946px;top:709px;width:1px;height:603px;background:#b9bdc1;"></div>
<div style="position:absolute;left:2021px;top:709px;width:1px;height:603px;background:#b9bdc1;"></div>
<svg style="position:absolute;left:0px;top:0px;pointer-events:none;" width="2175" height="1316" viewBox="0 0 2175 1316"><path d="M946 822.5 L1065.4 822.5 M1082.7 822.5 L1249.3 822.5 M1266.7 822.5 L1901.6 822.5 M1935 822.5 L2021 822.5" stroke="#c3c7cb" stroke-width="1.05"/><path d="M1060.8 814.2 L1065.4 814.2 L1065.4 830.8 L1060.8 830.8" fill="none" stroke="#c3c7cb" stroke-width="1.5"/><path d="M1087.3 814.2 L1082.7 814.2 L1082.7 830.8 L1087.3 830.8" fill="none" stroke="#c3c7cb" stroke-width="1.5"/><path d="M1244.8 814.2 L1249.4 814.2 L1249.4 830.8 L1244.8 830.8" fill="none" stroke="#c3c7cb" stroke-width="1.5"/><path d="M1271.3 814.2 L1266.7 814.2 L1266.7 830.8 L1271.3 830.8" fill="none" stroke="#c3c7cb" stroke-width="1.5"/><path d="M1911.9 814.1 A8.4 8.4 0 0 0 1911.9 830.9" fill="none" stroke="#c3c7cb" stroke-width="1.3"/><path d="M1925.1 814.1 A8.4 8.4 0 0 1 1925.1 830.9" fill="none" stroke="#c3c7cb" stroke-width="1.3"/><path d="M973.7 822.5 L973.7 926 L1065.4 926 M1082.7 926 L1364.3 926 L1364.3 822.5" fill="none" stroke="#c3c7cb" stroke-width="1.05"/><path d="M1060.8 917.7 L1065.4 917.7 L1065.4 934.3 L1060.8 934.3" fill="none" stroke="#c3c7cb" stroke-width="1.5"/><path d="M1087.3 917.7 L1082.7 917.7 L1082.7 934.3 L1087.3 934.3" fill="none" stroke="#c3c7cb" stroke-width="1.5"/><path d="M946 1069.5 L1049.7 1069.5 M1067 1069.5 L1901.6 1069.5 M1935 1069.5 L2021 1069.5" stroke="#c3c7cb" stroke-width="1.05"/><path d="M967 1069.5 L1049 1069.5 M1067 1069.5 L1150 1069.5" stroke="#1c8a3a" stroke-width="3"/><path d="M1045.1 1061.2 L1049.7 1061.2 L1049.7 1077.8 L1045.1 1077.8" fill="none" stroke="#c3c7cb" stroke-width="1.5"/><path d="M1071.6 1061.2 L1067.0 1061.2 L1067.0 1077.8 L1071.6 1077.8" fill="none" stroke="#c3c7cb" stroke-width="1.5"/><path d="M1060.9 1064.0 L1055.9 1075.0" stroke="#555" stroke-width="1.2"/><path d="M1911.4 1061.1 A8.4 8.4 0 0 0 1911.4 1077.9" fill="none" stroke="#c3c7cb" stroke-width="1.3"/><path d="M1924.6 1061.1 A8.4 8.4 0 0 1 1924.6 1077.9" fill="none" stroke="#c3c7cb" stroke-width="1.3"/><path d="M946 1220.5 L1648 1220.5 M1876 1220.5 L2021 1220.5" stroke="#c3c7cb" stroke-width="1.05"/><path d="M1876 1245 L1893 1245 M1940.6 1245 L1958 1245" stroke="#c3c7cb" stroke-width="1.2"/><path d="M1900 1237.4 A7.8 7.8 0 0 0 1900 1252.6" fill="none" stroke="#c3c7cb" stroke-width="1.2"/><path d="M1933.6 1237.4 A7.8 7.8 0 0 1 1933.6 1252.6" fill="none" stroke="#c3c7cb" stroke-width="1.2"/><path d="M1876 1269 L1893 1269 M1940.6 1269 L1958 1269" stroke="#c3c7cb" stroke-width="1.2"/><path d="M1900 1261.4 A7.8 7.8 0 0 0 1900 1276.6" fill="none" stroke="#c3c7cb" stroke-width="1.2"/><path d="M1933.6 1261.4 A7.8 7.8 0 0 1 1933.6 1276.6" fill="none" stroke="#c3c7cb" stroke-width="1.2"/><path d="M1876 1293 L1893 1293 M1940.6 1293 L1958 1293" stroke="#c3c7cb" stroke-width="1.2"/><path d="M1900 1285.4 A7.8 7.8 0 0 0 1900 1300.6" fill="none" stroke="#c3c7cb" stroke-width="1.2"/><path d="M1933.6 1285.4 A7.8 7.8 0 0 1 1933.6 1300.6" fill="none" stroke="#c3c7cb" stroke-width="1.2"/><path d="M1876 1317 L1893 1317 M1940.6 1317 L1958 1317" stroke="#c3c7cb" stroke-width="1.2"/><path d="M1900 1309.4 A7.8 7.8 0 0 0 1900 1324.6" fill="none" stroke="#c3c7cb" stroke-width="1.2"/><path d="M1933.6 1309.4 A7.8 7.8 0 0 1 1933.6 1324.6" fill="none" stroke="#c3c7cb" stroke-width="1.2"/></svg>
<div style="position:absolute;left:889.70px;width:600px;text-align:center;top:726.00px;font-family:'Liberation Sans', sans-serif;font-size:13.8px;line-height:13.8px;color:#5f6368;font-weight:normal;white-space:pre;">Output for the Digital Output (DO)</div>
<div style="position:absolute;left:774.00px;width:600px;text-align:center;top:762.00px;font-family:'Liberation Sans', sans-serif;font-size:13.7px;line-height:13.7px;color:#1f1f1f;font-weight:normal;white-space:pre;">owner._auto</div>
<div style="position:absolute;left:774.00px;width:600px;text-align:center;top:781.00px;font-family:'Liberation Sans', sans-serif;font-size:9.8px;line-height:9.8px;color:#6a6e72;font-weight:normal;white-space:pre;">CM_Valve.Control</div>
<div style="position:absolute;left:958.00px;width:600px;text-align:center;top:762.00px;font-family:'Liberation Sans', sans-serif;font-size:13.7px;line-height:13.7px;color:#1f1f1f;font-weight:normal;white-space:pre;">Valve_Cmds.Open</div>
<div style="position:absolute;left:958.00px;width:600px;text-align:center;top:781.00px;font-family:'Liberation Sans', sans-serif;font-size:9.8px;line-height:9.8px;color:#6a6e72;font-weight:normal;white-space:pre;">CM_Valve.Control.Valve_Cmds</div>
<div style="position:absolute;left:1618.80px;width:600px;text-align:center;top:762.00px;font-family:'Liberation Sans', sans-serif;font-size:13.7px;line-height:13.7px;color:#1f1f1f;font-weight:normal;white-space:pre;">Valve_Fdbk.Cmd_Open</div>
<div style="position:absolute;left:1618.80px;width:600px;text-align:center;top:781.00px;font-family:'Liberation Sans', sans-serif;font-size:9.8px;line-height:9.8px;color:#6a6e72;font-weight:normal;white-space:pre;">CM_Valve.Control.Valve_Fdbk</div>
<div style="position:absolute;left:774.00px;width:600px;text-align:center;top:865.00px;font-family:'Liberation Sans', sans-serif;font-size:13.7px;line-height:13.7px;color:#1f1f1f;font-weight:normal;white-space:pre;">owner._manual</div>
<div style="position:absolute;left:774.00px;width:600px;text-align:center;top:885.00px;font-family:'Liberation Sans', sans-serif;font-size:9.8px;line-height:9.8px;color:#6a6e72;font-weight:normal;white-space:pre;">CM_Valve.Control</div>
<div style="position:absolute;left:758.20px;width:600px;text-align:center;top:1009.00px;font-family:'Liberation Sans', sans-serif;font-size:13.7px;line-height:13.7px;color:#1f1f1f;font-weight:normal;white-space:pre;">Valve_Fdbk.Cmd_Open</div>
<div style="position:absolute;left:758.20px;width:600px;text-align:center;top:1029.00px;font-family:'Liberation Sans', sans-serif;font-size:9.8px;line-height:9.8px;color:#6a6e72;font-weight:normal;white-space:pre;">CM_Valve.Control.Valve_Fdbk</div>
<div style="position:absolute;left:1617.50px;width:600px;text-align:center;top:1009.00px;font-family:'Liberation Sans', sans-serif;font-size:13.7px;line-height:13.7px;color:#1f1f1f;font-weight:normal;white-space:pre;">Valve_Fdbk.Cmd_Close</div>
<div style="position:absolute;left:1617.50px;width:600px;text-align:center;top:1029.00px;font-family:'Liberation Sans', sans-serif;font-size:9.8px;line-height:9.8px;color:#6a6e72;font-weight:normal;white-space:pre;">CM_Valve.Control.Valve_Fdbk</div>
<div style="position:absolute;left:1087.40px;top:1149.00px;font-family:'Liberation Sans', sans-serif;font-size:13.8px;line-height:13.8px;color:#5f6368;font-weight:normal;white-space:pre;">Valve Logic</div>
<div style="position:absolute;left:1648px;top:1180px;width:228px;height:140px;background:#ffffff;border:1px solid #c3c7cb;box-sizing:border-box;border-radius:6px 0 0 0;"></div>
<div style="position:absolute;left:1648px;top:1180px;width:228px;height:25px;background:#bfc3c7;border-radius:6px 0 0 0;"></div>
<div style="position:absolute;left:1656.00px;top:1186.00px;font-family:'Liberation Sans', sans-serif;font-size:13.3px;line-height:13.3px;color:#1f1f1f;font-weight:normal;white-space:pre;">raM_Dvc_Valve_Fdbk</div>
<div style="position:absolute;left:1656.00px;top:1213.00px;font-family:'Liberation Sans', sans-serif;font-size:9.7px;line-height:9.7px;color:#6a6e72;font-weight:normal;white-space:pre;">raM_Dvc_Valve_Fdbk</div>
<div style="position:absolute;left:1754.5px;top:1210px;width:89.5px;height:15.5px;background:#fff;border:1px solid #c3c7cb;box-sizing:border-box;"></div>
<div style="position:absolute;left:1239.00px;width:600px;text-align:right;top:1213.00px;font-family:'Liberation Sans', sans-serif;font-size:9.7px;line-height:9.7px;color:#1f1f1f;font-weight:normal;white-space:pre;">owner.Valve_Fdbk</div>
<div style="position:absolute;left:1656.00px;top:1230.00px;font-family:'Liberation Sans', sans-serif;font-size:9.7px;line-height:9.7px;color:#6a6e72;font-weight:normal;white-space:pre;">Inp_OpenFdbk</div>
<div style="position:absolute;left:1802px;top:1226.9px;width:42px;height:15.5px;background:#fff;border:1px solid #c3c7cb;box-sizing:border-box;"></div>
<div style="position:absolute;left:1239.00px;width:600px;text-align:right;top:1230.00px;font-family:'Liberation Sans', sans-serif;font-size:9.7px;line-height:9.7px;color:#1f1f1f;font-weight:normal;white-space:pre;">0</div>
<svg style="position:absolute;left:1848px;top:1229.8000000000002px;" width="13" height="10" viewBox="0 0 13 10"><path d="M0.2 4.6 L5 0.2 L5 2.8 L12.4 2.8 L12.4 6.4 L5 6.4 L5 9 Z" fill="#1b3f7a"/></svg>
<div style="position:absolute;left:1656.00px;top:1247.00px;font-family:'Liberation Sans', sans-serif;font-size:9.7px;line-height:9.7px;color:#6a6e72;font-weight:normal;white-space:pre;">Inp_ClosedFdbk</div>
<div style="position:absolute;left:1802px;top:1243.9px;width:42px;height:15.5px;background:#fff;border:1px solid #c3c7cb;box-sizing:border-box;"></div>
<div style="position:absolute;left:1239.00px;width:600px;text-align:right;top:1247.00px;font-family:'Liberation Sans', sans-serif;font-size:9.7px;line-height:9.7px;color:#1f1f1f;font-weight:normal;white-space:pre;">0</div>
<svg style="position:absolute;left:1848px;top:1246.8000000000002px;" width="13" height="10" viewBox="0 0 13 10"><path d="M0.2 4.6 L5 0.2 L5 2.8 L12.4 2.8 L12.4 6.4 L5 6.4 L5 9 Z" fill="#1b3f7a"/></svg>
<div style="position:absolute;left:1656.00px;top:1264.00px;font-family:'Liberation Sans', sans-serif;font-size:9.7px;line-height:9.7px;color:#6a6e72;font-weight:normal;white-space:pre;">Cfg_UnpoweredState</div>
<div style="position:absolute;left:1802px;top:1260.9px;width:42px;height:15.5px;background:#fff;border:1px solid #c3c7cb;box-sizing:border-box;"></div>
<div style="position:absolute;left:1239.00px;width:600px;text-align:right;top:1264.00px;font-family:'Liberation Sans', sans-serif;font-size:9.7px;line-height:9.7px;color:#1f1f1f;font-weight:normal;white-space:pre;">0</div>
<svg style="position:absolute;left:1848px;top:1263.8000000000002px;" width="13" height="10" viewBox="0 0 13 10"><path d="M0.2 4.6 L5 0.2 L5 2.8 L12.4 2.8 L12.4 6.4 L5 6.4 L5 9 Z" fill="#1b3f7a"/></svg>
<div style="position:absolute;left:1656.00px;top:1281.00px;font-family:'Liberation Sans', sans-serif;font-size:9.7px;line-height:9.7px;color:#6a6e72;font-weight:normal;white-space:pre;">Cfg_OpenFdbk</div>
<div style="position:absolute;left:1802px;top:1277.9px;width:42px;height:15.5px;background:#fff;border:1px solid #c3c7cb;box-sizing:border-box;"></div>
<div style="position:absolute;left:1239.00px;width:600px;text-align:right;top:1281.00px;font-family:'Liberation Sans', sans-serif;font-size:9.7px;line-height:9.7px;color:#1f1f1f;font-weight:normal;white-space:pre;">0</div>
<svg style="position:absolute;left:1848px;top:1280.8000000000002px;" width="13" height="10" viewBox="0 0 13 10"><path d="M0.2 4.6 L5 0.2 L5 2.8 L12.4 2.8 L12.4 6.4 L5 6.4 L5 9 Z" fill="#1b3f7a"/></svg>
<div style="position:absolute;left:1656.00px;top:1298.00px;font-family:'Liberation Sans', sans-serif;font-size:9.7px;line-height:9.7px;color:#6a6e72;font-weight:normal;white-space:pre;">Cfg_ClosedFdbk</div>
<div style="position:absolute;left:1802px;top:1294.9px;width:42px;height:15.5px;background:#fff;border:1px solid #c3c7cb;box-sizing:border-box;"></div>
<div style="position:absolute;left:1239.00px;width:600px;text-align:right;top:1298.00px;font-family:'Liberation Sans', sans-serif;font-size:9.7px;line-height:9.7px;color:#1f1f1f;font-weight:normal;white-space:pre;">0</div>
<svg style="position:absolute;left:1848px;top:1297.8000000000002px;" width="13" height="10" viewBox="0 0 13 10"><path d="M0.2 4.6 L5 0.2 L5 2.8 L12.4 2.8 L12.4 6.4 L5 6.4 L5 9 Z" fill="#1b3f7a"/></svg>
<div style="position:absolute;left:1616.70px;width:600px;text-align:center;top:1241.00px;font-family:'Liberation Sans', sans-serif;font-size:9.4px;line-height:9.4px;color:#555;font-weight:normal;white-space:pre;">Sts_EO</div>
<div style="position:absolute;left:1616.70px;width:600px;text-align:center;top:1265.00px;font-family:'Liberation Sans', sans-serif;font-size:9.4px;line-height:9.4px;color:#555;font-weight:normal;white-space:pre;">Sts_EN</div>
<div style="position:absolute;left:1616.70px;width:600px;text-align:center;top:1289.00px;font-family:'Liberation Sans', sans-serif;font-size:9.4px;line-height:9.4px;color:#555;font-weight:normal;white-space:pre;">Sts_ER</div>
<svg style="position:absolute;left:2026px;top:704px;" width="10" height="10" viewBox="0 0 10 10"><path d="M1.4 7.4 L5 3 L8.6 7.4 Z" fill="#a9b6c6"/></svg>
<div style="position:absolute;left:2030px;top:719px;width:4px;height:22px;background:#b8bcc0;border-radius:2px;"></div>
<svg style="position:absolute;left:2026px;top:1301px;" width="10" height="10" viewBox="0 0 10 10"><path d="M1.4 2.6 L5 7 L8.6 2.6 Z" fill="#a9b6c6"/></svg>
<div style="position:absolute;left:897px;top:1312px;width:1141px;height:4px;background:#d8dcdf;border-top:1px solid #c6cacd;box-sizing:border-box;"></div>
</body></html>
